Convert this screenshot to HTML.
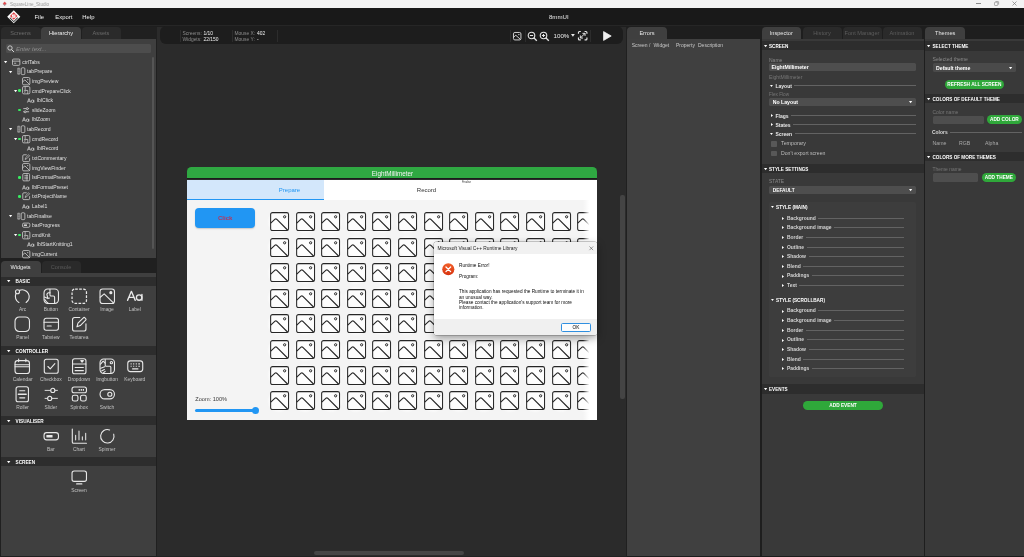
<!DOCTYPE html>
<html><head><meta charset="utf-8"><title>SquareLine_Studio</title><style>
*{box-sizing:border-box;margin:0;padding:0}
html,body{width:1024px;height:557px;overflow:hidden;background:#2b2b2b;font-family:"Liberation Sans",sans-serif;}
.a{position:absolute}
.t{position:absolute;white-space:nowrap;line-height:1;font-size:5.6px;color:#d8d8d8;transform:translateY(-50%)}
.b{font-weight:bold;color:#fff}
.g{color:#8a8a8a}
.hdr{position:absolute;background:#2d2d2d;height:9px}
.tab{position:absolute;border-radius:4px 4px 0 0;height:12px;top:27px;background:#2a2a2a}
.tab.on{background:#3f3f3f}
.line{position:absolute;height:1px;background:#5a5a5a}
.btn{position:absolute;white-space:nowrap;background:#2fa83a;border-radius:5px;color:#fff;font-weight:bold;font-size:4.75px;text-align:center}
.inp{position:absolute;background:#4e4e4e;border-radius:1.5px}
svg{position:absolute;overflow:visible}
</style></head><body><div id="root" style="position:absolute;left:0;top:0;width:1024px;height:557px;will-change:transform;overflow:hidden">
<div class="a" style="left:0px;top:0px;width:1024px;height:8px;background:#f3f3f3;"></div>
<svg style="left:1.7px;top:1.2px" width="5.4" height="5.4" viewBox="0 0 10 10"><path d="M5 0.3L9.7 5L5 9.7L0.3 5Z" fill="#e8d8d8"/><path d="M5 1.3L8.2 4.5L5 7.4L1.8 4.5Z" fill="#e0484c"/><path d="M2 6L5 9L8 6L7.4 5.4L5 7.8L2.6 5.4Z" fill="#666"/></svg>
<div class="t " style="left:10px;top:4.8px;color:#9a9a9a;font-size:4.6px">SquareLine_Studio</div>
<div class="a" style="left:975.5px;top:3.2px;width:5px;height:0.8px;background:#8a8a8a;"></div>
<svg style="left:993.5px;top:0.8px" width="5" height="5" viewBox="0 0 10 10"><rect x="1" y="2.5" width="6.5" height="6.5" rx="1.2" fill="none" stroke="#8a8a8a" stroke-width="1.3"/><path d="M3 1H8.2Q9.2 1 9.2 2V7" fill="none" stroke="#8a8a8a" stroke-width="1.3"/></svg>
<svg style="left:1011.5px;top:0.8px" width="5" height="5" viewBox="0 0 10 10"><path d="M1 1L9 9M9 1L1 9" stroke="#7a7a7a" stroke-width="1.4"/></svg>
<div class="a" style="left:0px;top:8px;width:1024px;height:18px;background:#191919;"></div>
<div class="a" style="left:0px;top:24.6px;width:1024px;height:1px;background:#262626;"></div>
<div class="a" style="left:0px;top:25.6px;width:1024px;height:14px;background:#1e1e1e;"></div>
<svg style="left:7px;top:10px" width="13.5" height="13.5" viewBox="0 0 20 20"><path d="M10 0.3L19.7 10L10 19.7L0.3 10Z" fill="#fff"/><path d="M10 3.2L15.6 8.8L10 14.4L4.4 8.8Z" fill="#e23a3f"/><path d="M7.3 6.7H12.7V8.1H8.9V8.4H12.7V11.4H7.3V10H11.1V9.7H7.3Z" fill="#fff" transform="rotate(0 10 9)"/><path d="M3.6 11.7L10 18L16.4 11.7L15.5 10.8L10 16.2L4.5 10.8Z" fill="#3a3a3a"/></svg>
<div class="t " style="left:34.5px;top:18.2px;color:#f0f0f0;font-size:5.9px">File</div>
<div class="t " style="left:55.3px;top:18.2px;color:#f0f0f0;font-size:5.9px">Export</div>
<div class="t " style="left:82.3px;top:18.2px;color:#f0f0f0;font-size:5.9px">Help</div>
<div class="t " style="left:558.8px;top:16.8px;transform:translate(-50%,-50%);color:#e8e8e8;font-size:6.1px">8mmUI</div>
<div class="a" style="left:157px;top:26.5px;width:470px;height:531px;background:#2b2b2b;"></div>
<div class="a" style="left:160px;top:26.3px;width:463px;height:17.6px;background:#1d1d1d;border-radius:6px"></div>
<div class="a" style="left:179.5px;top:30px;width:0.8px;height:12px;background:#2c2c2c;"></div>
<div class="a" style="left:232.3px;top:30px;width:0.8px;height:12px;background:#2c2c2c;"></div>
<div class="a" style="left:277.3px;top:30px;width:0.8px;height:12px;background:#2c2c2c;"></div>
<div class="a" style="left:509.5px;top:30px;width:0.8px;height:12px;background:#2c2c2c;"></div>
<div class="a" style="left:525px;top:30px;width:0.8px;height:12px;background:#2c2c2c;"></div>
<div class="a" style="left:589.5px;top:30px;width:0.8px;height:12px;background:#2c2c2c;"></div>
<div class="t g" style="left:182.5px;top:34.1px;font-size:4.9px;color:#8c8c8c">Screens:</div>
<div class="t " style="left:203.5px;top:34.1px;font-size:4.9px;color:#eee">1/10</div>
<div class="t g" style="left:182.5px;top:39.9px;font-size:4.9px;color:#8c8c8c">Widgets:</div>
<div class="t " style="left:203.5px;top:39.9px;font-size:4.9px;color:#eee">22/150</div>
<div class="t g" style="left:234.5px;top:34.1px;font-size:4.9px;color:#8c8c8c">Mouse X:</div>
<div class="t " style="left:257px;top:34.1px;font-size:4.9px;color:#eee">402</div>
<div class="t g" style="left:234.5px;top:39.9px;font-size:4.9px;color:#8c8c8c">Mouse Y:</div>
<div class="t " style="left:257px;top:39.9px;font-size:4.9px;color:#eee">-</div>
<svg style="left:512.8px;top:31.5px" width="8.4" height="8.4" viewBox="0 0 18 18"><rect x="1" y="1" width="16" height="16" rx="3" fill="none" stroke="#e6e6e6" stroke-width="1.9"/><path d="M1.5 11L6 7L16 16" fill="none" stroke="#e6e6e6" stroke-width="1.9"/><circle cx="12.6" cy="5.6" r="1.5" fill="#e6e6e6"/></svg>
<svg style="left:526.6px;top:30.6px" width="10.6" height="10.6" viewBox="0 0 20 20"><circle cx="8.5" cy="8.5" r="6.2" fill="none" stroke="#e6e6e6" stroke-width="2.1"/><path d="M13 13L18.5 18.5" stroke="#e6e6e6" stroke-width="2.6"/><path d="M5.5 8.5H11.5" stroke="#e6e6e6" stroke-width="2"/></svg>
<svg style="left:538.8px;top:30.6px" width="10.6" height="10.6" viewBox="0 0 20 20"><circle cx="8.5" cy="8.5" r="6.2" fill="none" stroke="#e6e6e6" stroke-width="2.1"/><path d="M13 13L18.5 18.5" stroke="#e6e6e6" stroke-width="2.6"/><path d="M5.5 8.5H11.5M8.5 5.5V11.5" stroke="#e6e6e6" stroke-width="2"/></svg>
<div class="t " style="left:553.5px;top:35.699999999999996px;color:#e8e8e8;font-size:6.2px">100%</div>
<svg style="left:570.6px;top:34.46px" width="3.8" height="2.6599999999999997" viewBox="0 0 2 1.4"><path d="M0 0H2L1 1.4Z" fill="#e8e8e8"/></svg>
<svg style="left:578px;top:31px" width="9.4" height="9.4" viewBox="0 0 20 20"><path d="M1 6V3Q1 1 3 1H6M14 1H17Q19 1 19 3V6M19 14V17Q19 19 17 19H14M6 19H3Q1 19 1 17V14" fill="none" stroke="#e6e6e6" stroke-width="2.5"/><path d="M5 15L15 5M9.5 5H15V10.5M5 9.5V15H10.5" fill="none" stroke="#e6e6e6" stroke-width="2.1"/></svg>
<svg style="left:603.2px;top:30.9px" width="8.6" height="10" viewBox="0 0 9 10.4"><path d="M0.6 0.6L8.6 5.2L0.6 9.8Z" fill="#f0f0f0" stroke="#f0f0f0" stroke-width="0.8" stroke-linejoin="round"/></svg>
<div class="a" style="left:620.2px;top:195px;width:4.8px;height:204px;background:#444;border-radius:2px"></div>
<div class="a" style="left:313.5px;top:550.5px;width:150px;height:4.5px;background:#454545;border-radius:2px"></div>
<div class="a" style="left:157px;top:556px;width:470px;height:1px;background:#222;"></div>
<div class="a" style="left:0px;top:26.5px;width:157px;height:531px;background:#202020;"></div>
<div class="tab" style="left:1px;width:39.5px"></div>
<div class="tab on" style="left:41px;width:40px"></div>
<div class="tab" style="left:82px;width:38.5px"></div>
<div class="t " style="left:20.5px;top:33.9px;transform:translate(-50%,-50%);color:#6a6a6a;font-size:5.6px">Screens</div>
<div class="t " style="left:61px;top:33.9px;transform:translate(-50%,-50%);color:#f0f0f0;font-size:5.6px">Hierarchy</div>
<div class="t " style="left:101px;top:33.9px;transform:translate(-50%,-50%);color:#6a6a6a;font-size:5.6px">Assets</div>
<div class="a" style="left:1px;top:39px;width:155px;height:218.5px;background:#3f3f3f;"></div>
<div class="a" style="left:6px;top:43.5px;width:145px;height:9px;background:#4d4d4d;border-radius:1.5px"></div>
<svg style="left:7px;top:44.5px" width="7.5" height="7.5" viewBox="0 0 20 20"><circle cx="8" cy="8" r="5.8" fill="none" stroke="#e0e0e0" stroke-width="2.2"/><path d="M12.5 12.5L18.5 18.5" stroke="#e0e0e0" stroke-width="2.6"/></svg>
<div class="t " style="left:16px;top:48.9px;color:#8e8e8e;font-style:italic;font-size:6px">Enter text...</div>
<div class="a" style="left:152px;top:57px;width:1.6px;height:192px;background:#555;border-radius:1px"></div>
<svg style="left:3.6999999999999997px;top:61.04px" width="3.2" height="2.2399999999999998" viewBox="0 0 2 1.4"><path d="M0 0H2L1 1.4Z" fill="#fff"/></svg>
<svg style="left:12.0px;top:57.599999999999994px" width="8.4" height="8.4" viewBox="0 0 16 16" fill="none" stroke="#dcdcdc" stroke-width="1.4"><rect x="1" y="2" width="14" height="12" rx="2"/><path d="M1 6H15M4 10H8"/></svg>
<div class="t " style="left:22.2px;top:62.699999999999996px;font-size:5.1px;color:#e0e0e0">ctrlTabs</div>
<svg style="left:8.6px;top:70.66000000000001px" width="3.2" height="2.2399999999999998" viewBox="0 0 2 1.4"><path d="M0 0H2L1 1.4Z" fill="#fff"/></svg>
<svg style="left:16.9px;top:67.22px" width="8.4" height="8.4" viewBox="0 0 16 16" fill="none" stroke="#dcdcdc" stroke-width="1.4"><rect x="1.2" y="2" width="4.2" height="12" rx="0.8" fill="#8a8a8a" stroke="#b0b0b0" stroke-width="1"/><path d="M1.2 6H5.4M1.2 10H5.4" stroke="#3f3f3f" stroke-width="0.9"/><rect x="8" y="1.5" width="7" height="13" rx="2"/></svg>
<div class="t " style="left:27.099999999999998px;top:72.32000000000001px;font-size:5.1px;color:#e0e0e0">tabPrepare</div>
<svg style="left:21.8px;top:76.83999999999999px" width="8.4" height="8.4" viewBox="0 0 16 16" fill="none" stroke="#dcdcdc" stroke-width="1.4"><rect x="1" y="1" width="14" height="14" rx="2.5"/><path d="M1.5 9L5.5 5.5L14.5 14.5"/><circle cx="11" cy="5" r="1" fill="#dcdcdc" stroke="none"/></svg>
<div class="t " style="left:32.0px;top:81.94px;font-size:5.1px;color:#e0e0e0">imgPreview</div>
<svg style="left:13.500000000000002px;top:89.9px" width="3.2" height="2.2399999999999998" viewBox="0 0 2 1.4"><path d="M0 0H2L1 1.4Z" fill="#fff"/></svg>
<div class="a" style="left:17.900000000000002px;top:89.46px;width:2.7px;height:2.7px;border-radius:50%;background:#38ee62"></div>
<svg style="left:21.8px;top:86.46px" width="8.4" height="8.4" viewBox="0 0 16 16" fill="none" stroke="#dcdcdc" stroke-width="1.4"><rect x="1" y="1" width="14" height="14" rx="2.5"/><path d="M6 1.5V8.5H11V15M3.5 9.5L6 8.5M4 12L7 11" stroke-width="1.3"/></svg>
<div class="t " style="left:32.0px;top:91.56px;font-size:5.1px;color:#e0e0e0">cmdPrepareClick</div>
<svg style="left:26.800000000000004px;top:97.98px" width="7.4" height="4.9" viewBox="0 0 21 14" fill="none" stroke="#dcdcdc" stroke-width="2"><path d="M1 13L5.7 1.5L10.4 13M2.7 9.2H8.7"/><circle cx="15.6" cy="9.2" r="3.5"/><path d="M19.4 5.2V13.2"/></svg>
<div class="t " style="left:36.900000000000006px;top:101.18px;font-size:5.1px;color:#e0e0e0">lblClick</div>
<div class="a" style="left:17.900000000000002px;top:108.69999999999999px;width:2.7px;height:2.7px;border-radius:50%;background:#38ee62"></div>
<svg style="left:21.8px;top:105.69999999999999px" width="8.4" height="8.4" viewBox="0 0 16 16" fill="none" stroke="#dcdcdc" stroke-width="1.4"><path d="M2.5 5H13.5M2.5 11H13.5" stroke-width="1.5"/><circle cx="10" cy="5" r="1.9" fill="#3f3f3f"/><circle cx="6" cy="11" r="1.9" fill="#3f3f3f"/></svg>
<div class="t " style="left:32.0px;top:110.8px;font-size:5.1px;color:#e0e0e0">slideZoom</div>
<svg style="left:21.900000000000002px;top:117.22px" width="7.4" height="4.9" viewBox="0 0 21 14" fill="none" stroke="#dcdcdc" stroke-width="2"><path d="M1 13L5.7 1.5L10.4 13M2.7 9.2H8.7"/><circle cx="15.6" cy="9.2" r="3.5"/><path d="M19.4 5.2V13.2"/></svg>
<div class="t " style="left:32.0px;top:120.42px;font-size:5.1px;color:#e0e0e0">lblZoom</div>
<svg style="left:8.6px;top:128.37999999999997px" width="3.2" height="2.2399999999999998" viewBox="0 0 2 1.4"><path d="M0 0H2L1 1.4Z" fill="#fff"/></svg>
<svg style="left:16.9px;top:124.93999999999998px" width="8.4" height="8.4" viewBox="0 0 16 16" fill="none" stroke="#dcdcdc" stroke-width="1.4"><rect x="1.2" y="2" width="4.2" height="12" rx="0.8" fill="#8a8a8a" stroke="#b0b0b0" stroke-width="1"/><path d="M1.2 6H5.4M1.2 10H5.4" stroke="#3f3f3f" stroke-width="0.9"/><rect x="8" y="1.5" width="7" height="13" rx="2"/></svg>
<div class="t " style="left:27.099999999999998px;top:130.04px;font-size:5.1px;color:#e0e0e0">tabRecord</div>
<svg style="left:13.500000000000002px;top:137.99999999999997px" width="3.2" height="2.2399999999999998" viewBox="0 0 2 1.4"><path d="M0 0H2L1 1.4Z" fill="#fff"/></svg>
<div class="a" style="left:17.900000000000002px;top:137.56px;width:2.7px;height:2.7px;border-radius:50%;background:#38ee62"></div>
<svg style="left:21.8px;top:134.56px" width="8.4" height="8.4" viewBox="0 0 16 16" fill="none" stroke="#dcdcdc" stroke-width="1.4"><rect x="1" y="1" width="14" height="14" rx="2.5"/><path d="M6 1.5V8.5H11V15M3.5 9.5L6 8.5M4 12L7 11" stroke-width="1.3"/></svg>
<div class="t " style="left:32.0px;top:139.66px;font-size:5.1px;color:#e0e0e0">cmdRecord</div>
<svg style="left:26.800000000000004px;top:146.08px" width="7.4" height="4.9" viewBox="0 0 21 14" fill="none" stroke="#dcdcdc" stroke-width="2"><path d="M1 13L5.7 1.5L10.4 13M2.7 9.2H8.7"/><circle cx="15.6" cy="9.2" r="3.5"/><path d="M19.4 5.2V13.2"/></svg>
<div class="t " style="left:36.900000000000006px;top:149.28px;font-size:5.1px;color:#e0e0e0">lblRecord</div>
<svg style="left:21.8px;top:153.8px" width="8.4" height="8.4" viewBox="0 0 16 16" fill="none" stroke="#dcdcdc" stroke-width="1.4"><path d="M9 1.5H3.5Q1.5 1.5 1.5 3.5V12.5Q1.5 14.5 3.5 14.5H12.5Q14.5 14.5 14.5 12.5V8"/><path d="M6 10.5L7 7L12.5 1.5L14.5 3.5L9 9Z" stroke-width="1.2"/></svg>
<div class="t " style="left:32.0px;top:158.9px;font-size:5.1px;color:#e0e0e0">txtCommentary</div>
<svg style="left:21.8px;top:163.42000000000002px" width="8.4" height="8.4" viewBox="0 0 16 16" fill="none" stroke="#dcdcdc" stroke-width="1.4"><rect x="1" y="1" width="14" height="14" rx="2.5"/><path d="M1.5 9L5.5 5.5L14.5 14.5"/><circle cx="11" cy="5" r="1" fill="#dcdcdc" stroke="none"/></svg>
<div class="t " style="left:32.0px;top:168.52px;font-size:5.1px;color:#e0e0e0">imgViewFinder</div>
<div class="a" style="left:17.900000000000002px;top:176.04000000000002px;width:2.7px;height:2.7px;border-radius:50%;background:#38ee62"></div>
<svg style="left:21.8px;top:173.04000000000002px" width="8.4" height="8.4" viewBox="0 0 16 16" fill="none" stroke="#dcdcdc" stroke-width="1.4"><rect x="1.5" y="1" width="13" height="14" rx="2"/><path d="M4.5 5H11.5M4.5 8H11.5M4.5 11H11.5" stroke-width="1.3"/><path d="M9.5 1V15" stroke-width="1"/></svg>
<div class="t " style="left:32.0px;top:178.14000000000001px;font-size:5.1px;color:#e0e0e0">lstFormatPresets</div>
<svg style="left:21.900000000000002px;top:184.56px" width="7.4" height="4.9" viewBox="0 0 21 14" fill="none" stroke="#dcdcdc" stroke-width="2"><path d="M1 13L5.7 1.5L10.4 13M2.7 9.2H8.7"/><circle cx="15.6" cy="9.2" r="3.5"/><path d="M19.4 5.2V13.2"/></svg>
<div class="t " style="left:32.0px;top:187.76px;font-size:5.1px;color:#e0e0e0">lblFormatPreset</div>
<div class="a" style="left:17.900000000000002px;top:195.27999999999997px;width:2.7px;height:2.7px;border-radius:50%;background:#38ee62"></div>
<svg style="left:21.8px;top:192.27999999999997px" width="8.4" height="8.4" viewBox="0 0 16 16" fill="none" stroke="#dcdcdc" stroke-width="1.4"><path d="M9 1.5H3.5Q1.5 1.5 1.5 3.5V12.5Q1.5 14.5 3.5 14.5H12.5Q14.5 14.5 14.5 12.5V8"/><path d="M6 10.5L7 7L12.5 1.5L14.5 3.5L9 9Z" stroke-width="1.2"/></svg>
<div class="t " style="left:32.0px;top:197.37999999999997px;font-size:5.1px;color:#e0e0e0">txtProjectName</div>
<svg style="left:21.900000000000002px;top:203.79999999999998px" width="7.4" height="4.9" viewBox="0 0 21 14" fill="none" stroke="#dcdcdc" stroke-width="2"><path d="M1 13L5.7 1.5L10.4 13M2.7 9.2H8.7"/><circle cx="15.6" cy="9.2" r="3.5"/><path d="M19.4 5.2V13.2"/></svg>
<div class="t " style="left:32.0px;top:206.99999999999997px;font-size:5.1px;color:#e0e0e0">Label1</div>
<svg style="left:8.6px;top:214.95999999999995px" width="3.2" height="2.2399999999999998" viewBox="0 0 2 1.4"><path d="M0 0H2L1 1.4Z" fill="#fff"/></svg>
<svg style="left:16.9px;top:211.51999999999998px" width="8.4" height="8.4" viewBox="0 0 16 16" fill="none" stroke="#dcdcdc" stroke-width="1.4"><rect x="1.2" y="2" width="4.2" height="12" rx="0.8" fill="#8a8a8a" stroke="#b0b0b0" stroke-width="1"/><path d="M1.2 6H5.4M1.2 10H5.4" stroke="#3f3f3f" stroke-width="0.9"/><rect x="8" y="1.5" width="7" height="13" rx="2"/></svg>
<div class="t " style="left:27.099999999999998px;top:216.61999999999998px;font-size:5.1px;color:#e0e0e0">tabFinalise</div>
<svg style="left:21.8px;top:221.14px" width="8.4" height="8.4" viewBox="0 0 16 16" fill="none" stroke="#dcdcdc" stroke-width="1.4"><rect x="1" y="4" width="14" height="8" rx="2.5"/><rect x="3.5" y="6.6" width="6" height="2.8" fill="#dcdcdc" stroke="none"/></svg>
<div class="t " style="left:32.0px;top:226.23999999999998px;font-size:5.1px;color:#e0e0e0">barProgress</div>
<svg style="left:13.500000000000002px;top:234.19999999999996px" width="3.2" height="2.2399999999999998" viewBox="0 0 2 1.4"><path d="M0 0H2L1 1.4Z" fill="#fff"/></svg>
<div class="a" style="left:17.900000000000002px;top:233.76px;width:2.7px;height:2.7px;border-radius:50%;background:#38ee62"></div>
<svg style="left:21.8px;top:230.76px" width="8.4" height="8.4" viewBox="0 0 16 16" fill="none" stroke="#dcdcdc" stroke-width="1.4"><rect x="1" y="1" width="14" height="14" rx="2.5"/><path d="M6 1.5V8.5H11V15M3.5 9.5L6 8.5M4 12L7 11" stroke-width="1.3"/></svg>
<div class="t " style="left:32.0px;top:235.85999999999999px;font-size:5.1px;color:#e0e0e0">cmdKnit</div>
<svg style="left:26.800000000000004px;top:242.28px" width="7.4" height="4.9" viewBox="0 0 21 14" fill="none" stroke="#dcdcdc" stroke-width="2"><path d="M1 13L5.7 1.5L10.4 13M2.7 9.2H8.7"/><circle cx="15.6" cy="9.2" r="3.5"/><path d="M19.4 5.2V13.2"/></svg>
<div class="t " style="left:36.900000000000006px;top:245.48px;font-size:5.1px;color:#e0e0e0">lblStartKnitting1</div>
<svg style="left:21.8px;top:250.0px" width="8.4" height="8.4" viewBox="0 0 16 16" fill="none" stroke="#dcdcdc" stroke-width="1.4"><rect x="1" y="1" width="14" height="14" rx="2.5"/><path d="M1.5 9L5.5 5.5L14.5 14.5"/><circle cx="11" cy="5" r="1" fill="#dcdcdc" stroke="none"/></svg>
<div class="t " style="left:32.0px;top:255.1px;font-size:5.1px;color:#e0e0e0">imgCurrent</div>
<div class="tab on" style="left:1px;top:261px;width:39.5px;height:12.5px"></div>
<div class="tab" style="left:42px;top:261px;width:38.5px;height:12.5px"></div>
<div class="t " style="left:20.5px;top:268.2px;transform:translate(-50%,-50%);color:#f0f0f0;font-size:5.6px">Widgets</div>
<div class="t " style="left:61px;top:268.2px;transform:translate(-50%,-50%);color:#5a5a5a;font-size:5.6px">Console</div>
<div class="a" style="left:1px;top:273px;width:155px;height:282.6px;background:#3f3f3f;"></div>
<div class="a" style="left:1px;top:276.7px;width:155px;height:9px;background:#2d2d2d;"></div>
<svg style="left:6.499999999999999px;top:280.28000000000003px" width="3.4" height="2.38" viewBox="0 0 2 1.4"><path d="M0 0H2L1 1.4Z" fill="#fff"/></svg>
<div class="t b" style="left:15.6px;top:282.29999999999995px;font-size:4.7px">BASIC</div>
<div class="a" style="left:1px;top:346.3px;width:155px;height:9px;background:#2d2d2d;"></div>
<svg style="left:6.499999999999999px;top:349.88000000000005px" width="3.4" height="2.38" viewBox="0 0 2 1.4"><path d="M0 0H2L1 1.4Z" fill="#fff"/></svg>
<div class="t b" style="left:15.6px;top:351.9px;font-size:4.7px">CONTROLLER</div>
<div class="a" style="left:1px;top:416px;width:155px;height:9px;background:#2d2d2d;"></div>
<svg style="left:6.499999999999999px;top:419.58000000000004px" width="3.4" height="2.38" viewBox="0 0 2 1.4"><path d="M0 0H2L1 1.4Z" fill="#fff"/></svg>
<div class="t b" style="left:15.6px;top:421.59999999999997px;font-size:4.7px">VISUALISER</div>
<div class="a" style="left:1px;top:457.3px;width:155px;height:9px;background:#2d2d2d;"></div>
<svg style="left:6.499999999999999px;top:460.88000000000005px" width="3.4" height="2.38" viewBox="0 0 2 1.4"><path d="M0 0H2L1 1.4Z" fill="#fff"/></svg>
<div class="t b" style="left:15.6px;top:462.9px;font-size:4.7px">SCREEN</div>
<svg style="left:14.350000000000001px;top:287.75px" width="16.5" height="16.5" viewBox="0 0 32 32" fill="none" stroke="#e8e8e8" stroke-width="2.15" stroke-linecap="round" stroke-linejoin="round"><path d="M10.6 4.6A13.5 13.5 0 0 1 23.5 28.2M9.5 28.2A13.5 13.5 0 0 1 3.6 11.2"/><circle cx="6.8" cy="7.3" r="3.9"/></svg>
<div class="t " style="left:22.6px;top:309.9px;transform:translate(-50%,-50%);font-size:4.9px;color:#c2c2c2">Arc</div>
<svg style="left:42.55px;top:287.75px" width="16.5" height="16.5" viewBox="0 0 32 32" fill="none" stroke="#e8e8e8" stroke-width="2.15" stroke-linecap="round" stroke-linejoin="round"><rect x="2" y="2" width="28" height="28" rx="7"/><path d="M13.5 2.5V13.5Q13.5 15.5 15.5 15.5H20Q22.5 15.5 22.5 18V29.5"/><path d="M13.5 9.5Q8.5 8 7.5 12.5L9.5 20.5M3 17.5L9.5 20.5L12.5 19.5M3.5 22.5Q6 27 10 29.5"/></svg>
<div class="t " style="left:50.8px;top:309.9px;transform:translate(-50%,-50%);font-size:4.9px;color:#c2c2c2">Button</div>
<svg style="left:70.75px;top:287.75px" width="16.5" height="16.5" viewBox="0 0 32 32" fill="none" stroke="#e8e8e8" stroke-width="2.15" stroke-linecap="round" stroke-linejoin="round"><rect x="2" y="2" width="28" height="28" rx="6" stroke-dasharray="5.2 2.6" stroke-linecap="butt" stroke-width="2.4"/></svg>
<div class="t " style="left:79px;top:309.9px;transform:translate(-50%,-50%);font-size:4.9px;color:#c2c2c2">Container</div>
<svg style="left:98.75px;top:287.75px" width="16.5" height="16.5" viewBox="0 0 32 32" fill="none" stroke="#e8e8e8" stroke-width="2.15" stroke-linecap="round" stroke-linejoin="round"><rect x="2" y="2" width="28" height="28" rx="5"/><path d="M2.5 18L10 11.5L28.5 29.5"/><circle cx="23" cy="9" r="2" fill="#e8e8e8"/></svg>
<div class="t " style="left:107px;top:309.9px;transform:translate(-50%,-50%);font-size:4.9px;color:#c2c2c2">Image</div>
<svg style="left:126.05000000000001px;top:287.75px" width="17.5" height="16.5" viewBox="0 0 34 32" fill="none" stroke="#e8e8e8" stroke-width="2.6" stroke-linecap="round" stroke-linejoin="round"><path d="M3 24L10.5 6.5L18 24M5.6 18.2H15.4"/><circle cx="25.5" cy="18.5" r="5.3"/><path d="M31 12.5V24"/></svg>
<div class="t " style="left:134.8px;top:309.9px;transform:translate(-50%,-50%);font-size:4.9px;color:#c2c2c2">Label</div>
<svg style="left:14.350000000000001px;top:316.15px" width="16.5" height="16.5" viewBox="0 0 32 32" fill="none" stroke="#e8e8e8" stroke-width="2.15" stroke-linecap="round" stroke-linejoin="round"><rect x="2" y="2" width="28" height="28" rx="8"/></svg>
<div class="t " style="left:22.6px;top:338.29999999999995px;transform:translate(-50%,-50%);font-size:4.9px;color:#c2c2c2">Panel</div>
<svg style="left:42.55px;top:316.15px" width="16.5" height="16.5" viewBox="0 0 32 32" fill="none" stroke="#e8e8e8" stroke-width="2.15" stroke-linecap="round" stroke-linejoin="round"><rect x="2" y="4.5" width="28" height="23" rx="4"/><path d="M2 12H30M8 19.5H16"/></svg>
<div class="t " style="left:50.8px;top:338.29999999999995px;transform:translate(-50%,-50%);font-size:4.9px;color:#c2c2c2">Tabview</div>
<svg style="left:70.75px;top:316.15px" width="16.5" height="16.5" viewBox="0 0 32 32" fill="none" stroke="#e8e8e8" stroke-width="2.15" stroke-linecap="round" stroke-linejoin="round"><path d="M17 3H7Q3 3 3 7V25Q3 29 7 29H25Q29 29 29 25V15"/><path d="M11.5 21L13.5 14L24 3.5Q25.5 2 27 3.5L28.5 5Q30 6.5 28.5 8L18 18.5Z"/></svg>
<div class="t " style="left:79px;top:338.29999999999995px;transform:translate(-50%,-50%);font-size:4.9px;color:#c2c2c2">Textarea</div>
<svg style="left:14.350000000000001px;top:357.75px" width="16.5" height="16.5" viewBox="0 0 32 32" fill="none" stroke="#e8e8e8" stroke-width="2.15" stroke-linecap="round" stroke-linejoin="round"><rect x="2" y="5" width="28" height="25" rx="5"/><path d="M2 13H30M2 17H30M9 2V7M23 2V7"/></svg>
<div class="t " style="left:22.6px;top:379.9px;transform:translate(-50%,-50%);font-size:4.9px;color:#c2c2c2">Calendar</div>
<svg style="left:42.55px;top:357.75px" width="16.5" height="16.5" viewBox="0 0 32 32" fill="none" stroke="#e8e8e8" stroke-width="2.15" stroke-linecap="round" stroke-linejoin="round"><rect x="2.5" y="2.5" width="27" height="27" rx="4"/><path d="M9.5 16.5L14 21L23 11"/></svg>
<div class="t " style="left:50.8px;top:379.9px;transform:translate(-50%,-50%);font-size:4.9px;color:#c2c2c2">Checkbox</div>
<svg style="left:70.75px;top:357.75px" width="16.5" height="16.5" viewBox="0 0 32 32" fill="none" stroke="#e8e8e8" stroke-width="2.15" stroke-linecap="round" stroke-linejoin="round"><rect x="3" y="1.5" width="26" height="29" rx="4"/><path d="M3 11.5H29M8 18.5H24M8 24.5H24"/><path d="M19 5L21.5 8L24 5Z" fill="#e8e8e8"/></svg>
<div class="t " style="left:79px;top:379.9px;transform:translate(-50%,-50%);font-size:4.9px;color:#c2c2c2">Dropdown</div>
<svg style="left:98.75px;top:357.75px" width="16.5" height="16.5" viewBox="0 0 32 32" fill="none" stroke="#e8e8e8" stroke-width="2.15" stroke-linecap="round" stroke-linejoin="round"><rect x="2" y="2" width="28" height="28" rx="7"/><path d="M12 3V14Q12 16 14 16H21Q23 16 23 18V29"/><path d="M3 12L8 6L12 10M3.5 20L11 17M5 25L10.5 22.5M8.5 29L12 26"/><circle cx="24" cy="9" r="2.2"/></svg>
<div class="t " style="left:107px;top:379.9px;transform:translate(-50%,-50%);font-size:4.9px;color:#c2c2c2">Imgbutton</div>
<svg style="left:126.55000000000001px;top:357.75px" width="16.5" height="16.5" viewBox="0 0 32 32" fill="none" stroke="#e8e8e8" stroke-width="2.15" stroke-linecap="round" stroke-linejoin="round"><rect x="1.5" y="5.5" width="29" height="21" rx="5"/><path d="M7 11.5H9M12 11.5H14M17 11.5H19M22 11.5H25M7 16H9M12 16H14M17 16H19M22 16H25M10 21H22" stroke-width="2.2" stroke-linecap="butt"/></svg>
<div class="t " style="left:134.8px;top:379.9px;transform:translate(-50%,-50%);font-size:4.9px;color:#c2c2c2">Keyboard</div>
<svg style="left:14.350000000000001px;top:386.15px" width="16.5" height="16.5" viewBox="0 0 32 32" fill="none" stroke="#e8e8e8" stroke-width="2.15" stroke-linecap="round" stroke-linejoin="round"><rect x="4" y="1.5" width="24" height="29" rx="4"/><path d="M11 9H21M11 23H21" stroke-width="2"/><path d="M8.5 16H23.5" stroke-width="3"/></svg>
<div class="t " style="left:22.6px;top:408.29999999999995px;transform:translate(-50%,-50%);font-size:4.9px;color:#c2c2c2">Roller</div>
<svg style="left:42.55px;top:386.15px" width="16.5" height="16.5" viewBox="0 0 32 32" fill="none" stroke="#e8e8e8" stroke-width="2.15" stroke-linecap="round" stroke-linejoin="round"><path d="M4 8.5H28M4 24H28" stroke-width="1.8"/><circle cx="19" cy="8.5" r="4" fill="#3f3f3f"/><circle cx="13" cy="24" r="4" fill="#3f3f3f"/></svg>
<div class="t " style="left:50.8px;top:408.29999999999995px;transform:translate(-50%,-50%);font-size:4.9px;color:#c2c2c2">Slider</div>
<svg style="left:70.75px;top:386.15px" width="16.5" height="16.5" viewBox="0 0 32 32" fill="none" stroke="#e8e8e8" stroke-width="2.15" stroke-linecap="round" stroke-linejoin="round"><rect x="2" y="2" width="28" height="11" rx="4"/><path d="M16 6V9M20 6V9M24 6V9" stroke-width="2.4" stroke-linecap="butt"/><rect x="2.5" y="18" width="11" height="11" rx="3.5"/><rect x="18.5" y="18" width="11" height="11" rx="3.5"/></svg>
<div class="t " style="left:79px;top:408.29999999999995px;transform:translate(-50%,-50%);font-size:4.9px;color:#c2c2c2">Spinbox</div>
<svg style="left:98.75px;top:386.15px" width="16.5" height="16.5" viewBox="0 0 32 32" fill="none" stroke="#e8e8e8" stroke-width="2.15" stroke-linecap="round" stroke-linejoin="round"><rect x="2" y="7" width="28" height="18" rx="9"/><circle cx="21" cy="16" r="4"/></svg>
<div class="t " style="left:107px;top:408.29999999999995px;transform:translate(-50%,-50%);font-size:4.9px;color:#c2c2c2">Switch</div>
<svg style="left:42.55px;top:427.75px" width="16.5" height="16.5" viewBox="0 0 32 32" fill="none" stroke="#e8e8e8" stroke-width="2.15" stroke-linecap="round" stroke-linejoin="round"><rect x="2" y="9" width="28" height="14" rx="5"/><rect x="6.5" y="13.5" width="12" height="5" rx="1" fill="#e8e8e8" stroke="none"/></svg>
<div class="t " style="left:50.8px;top:449.9px;transform:translate(-50%,-50%);font-size:4.9px;color:#c2c2c2">Bar</div>
<svg style="left:70.75px;top:427.75px" width="16.5" height="16.5" viewBox="0 0 32 32" fill="none" stroke="#e8e8e8" stroke-width="2.15" stroke-linecap="round" stroke-linejoin="round"><path d="M2.5 2V27Q2.5 29.5 5 29.5H30"/><path d="M9 23V14M15.5 23V6M22 23V17M28.5 23V10" stroke-width="2"/></svg>
<div class="t " style="left:79px;top:449.9px;transform:translate(-50%,-50%);font-size:4.9px;color:#c2c2c2">Chart</div>
<svg style="left:98.75px;top:427.75px" width="16.5" height="16.5" viewBox="0 0 32 32" fill="none" stroke="#e8e8e8" stroke-width="2.15" stroke-linecap="round" stroke-linejoin="round"><path d="M20.5 3.8A13 13 0 1 0 28.5 12"/></svg>
<div class="t " style="left:107px;top:449.9px;transform:translate(-50%,-50%);font-size:4.9px;color:#c2c2c2">Spinner</div>
<svg style="left:70.75px;top:468.75px" width="16.5" height="16.5" viewBox="0 0 32 32" fill="none" stroke="#e8e8e8" stroke-width="2.15" stroke-linecap="round" stroke-linejoin="round"><rect x="2" y="4" width="28" height="20" rx="4"/><path d="M11 29H21" stroke-width="2.4"/></svg>
<div class="t " style="left:79px;top:490.9px;transform:translate(-50%,-50%);font-size:4.9px;color:#c2c2c2">Screen</div>
<div class="a" style="left:187px;top:167px;width:410px;height:11px;background:#2fa842;border-radius:4.5px 4.5px 0 0"></div>
<div class="t " style="left:392.5px;top:173.5px;transform:translate(-50%,-50%);color:#f4f4f4;font-size:6.3px">EightMillimeter</div>
<div class="a" style="left:187px;top:177.7px;width:410px;height:1.8px;background:#1c1c1c;"></div>
<div class="a" style="left:187px;top:179.5px;width:410px;height:240.5px;background:#f4f4f4;overflow:hidden">
<div class="a" style="left:0;top:0;width:410px;height:20px;background:#fff"></div>
<div class="a" style="left:0;top:0;width:137px;height:20px;background:#d3e7fb;border-bottom:1.6px solid #2196f3"></div>
<div class="t" style="left:102.5px;top:10.6px;transform:translate(-50%,-50%);color:#2196f3;font-size:6px">Prepare</div>
<div class="t" style="left:239.5px;top:10.6px;transform:translate(-50%,-50%);color:#333;font-size:6px">Record</div>
<div class="t" style="left:279.5px;top:3.2px;transform:translate(-50%,-50%);color:#333;font-size:2.6px">Finalise</div>
<div class="a" style="left:8px;top:28.8px;width:60.3px;height:20px;background:#2196f3;border-radius:4px;box-shadow:0 1px 1.5px rgba(0,0,0,.18)"></div>
<div class="t" style="left:38.2px;top:38.5px;transform:translate(-50%,-50%);color:#b8355c;font-weight:bold;font-size:6px">Click</div>
<div class="t" style="left:8.3px;top:220.5px;color:#3a3a3a;font-size:5.6px">Zoom: 100%</div>
<div class="a" style="left:8.3px;top:229.2px;width:63px;height:3.6px;border-radius:2px;background:#2196f3"></div>
<div class="a" style="left:64.6px;top:227.1px;width:7.8px;height:7.8px;border-radius:4px;background:#2196f3"></div>
<div class="a" style="left:74px;top:24px;width:328px;height:216px;overflow:hidden">
<div class="a" style="left:6.4px;top:6.0px;width:24px;height:24px;background:radial-gradient(closest-side,#fdfdfd 70%,rgba(253,253,253,0) 100%)"></div>
<svg style="left:8.9px;top:8.5px" width="19.2" height="19.2" viewBox="0 0 24 24" fill="none" stroke="#262626" stroke-width="1.3"><rect x="0.8" y="0.8" width="22.4" height="22.4" rx="2.3"/><path d="M0.9 14L6.3 9Q7.3 8.1 8.3 9L22.2 22.8" stroke-linejoin="round" stroke-width="1.45"/><circle cx="18.3" cy="6" r="1.4" stroke-width="1.25"/></svg>
<div class="a" style="left:32.0px;top:6.0px;width:24px;height:24px;background:radial-gradient(closest-side,#fdfdfd 70%,rgba(253,253,253,0) 100%)"></div>
<svg style="left:34.5px;top:8.5px" width="19.2" height="19.2" viewBox="0 0 24 24" fill="none" stroke="#262626" stroke-width="1.3"><rect x="0.8" y="0.8" width="22.4" height="22.4" rx="2.3"/><path d="M0.9 14L6.3 9Q7.3 8.1 8.3 9L22.2 22.8" stroke-linejoin="round" stroke-width="1.45"/><circle cx="18.3" cy="6" r="1.4" stroke-width="1.25"/></svg>
<div class="a" style="left:57.6px;top:6.0px;width:24px;height:24px;background:radial-gradient(closest-side,#fdfdfd 70%,rgba(253,253,253,0) 100%)"></div>
<svg style="left:60.1px;top:8.5px" width="19.2" height="19.2" viewBox="0 0 24 24" fill="none" stroke="#262626" stroke-width="1.3"><rect x="0.8" y="0.8" width="22.4" height="22.4" rx="2.3"/><path d="M0.9 14L6.3 9Q7.3 8.1 8.3 9L22.2 22.8" stroke-linejoin="round" stroke-width="1.45"/><circle cx="18.3" cy="6" r="1.4" stroke-width="1.25"/></svg>
<div class="a" style="left:83.20000000000002px;top:6.0px;width:24px;height:24px;background:radial-gradient(closest-side,#fdfdfd 70%,rgba(253,253,253,0) 100%)"></div>
<svg style="left:85.7px;top:8.5px" width="19.2" height="19.2" viewBox="0 0 24 24" fill="none" stroke="#262626" stroke-width="1.3"><rect x="0.8" y="0.8" width="22.4" height="22.4" rx="2.3"/><path d="M0.9 14L6.3 9Q7.3 8.1 8.3 9L22.2 22.8" stroke-linejoin="round" stroke-width="1.45"/><circle cx="18.3" cy="6" r="1.4" stroke-width="1.25"/></svg>
<div class="a" style="left:108.80000000000001px;top:6.0px;width:24px;height:24px;background:radial-gradient(closest-side,#fdfdfd 70%,rgba(253,253,253,0) 100%)"></div>
<svg style="left:111.3px;top:8.5px" width="19.2" height="19.2" viewBox="0 0 24 24" fill="none" stroke="#262626" stroke-width="1.3"><rect x="0.8" y="0.8" width="22.4" height="22.4" rx="2.3"/><path d="M0.9 14L6.3 9Q7.3 8.1 8.3 9L22.2 22.8" stroke-linejoin="round" stroke-width="1.45"/><circle cx="18.3" cy="6" r="1.4" stroke-width="1.25"/></svg>
<div class="a" style="left:134.4px;top:6.0px;width:24px;height:24px;background:radial-gradient(closest-side,#fdfdfd 70%,rgba(253,253,253,0) 100%)"></div>
<svg style="left:136.9px;top:8.5px" width="19.2" height="19.2" viewBox="0 0 24 24" fill="none" stroke="#262626" stroke-width="1.3"><rect x="0.8" y="0.8" width="22.4" height="22.4" rx="2.3"/><path d="M0.9 14L6.3 9Q7.3 8.1 8.3 9L22.2 22.8" stroke-linejoin="round" stroke-width="1.45"/><circle cx="18.3" cy="6" r="1.4" stroke-width="1.25"/></svg>
<div class="a" style="left:160.00000000000003px;top:6.0px;width:24px;height:24px;background:radial-gradient(closest-side,#fdfdfd 70%,rgba(253,253,253,0) 100%)"></div>
<svg style="left:162.5px;top:8.5px" width="19.2" height="19.2" viewBox="0 0 24 24" fill="none" stroke="#262626" stroke-width="1.3"><rect x="0.8" y="0.8" width="22.4" height="22.4" rx="2.3"/><path d="M0.9 14L6.3 9Q7.3 8.1 8.3 9L22.2 22.8" stroke-linejoin="round" stroke-width="1.45"/><circle cx="18.3" cy="6" r="1.4" stroke-width="1.25"/></svg>
<div class="a" style="left:185.60000000000002px;top:6.0px;width:24px;height:24px;background:radial-gradient(closest-side,#fdfdfd 70%,rgba(253,253,253,0) 100%)"></div>
<svg style="left:188.1px;top:8.5px" width="19.2" height="19.2" viewBox="0 0 24 24" fill="none" stroke="#262626" stroke-width="1.3"><rect x="0.8" y="0.8" width="22.4" height="22.4" rx="2.3"/><path d="M0.9 14L6.3 9Q7.3 8.1 8.3 9L22.2 22.8" stroke-linejoin="round" stroke-width="1.45"/><circle cx="18.3" cy="6" r="1.4" stroke-width="1.25"/></svg>
<div class="a" style="left:211.20000000000002px;top:6.0px;width:24px;height:24px;background:radial-gradient(closest-side,#fdfdfd 70%,rgba(253,253,253,0) 100%)"></div>
<svg style="left:213.7px;top:8.5px" width="19.2" height="19.2" viewBox="0 0 24 24" fill="none" stroke="#262626" stroke-width="1.3"><rect x="0.8" y="0.8" width="22.4" height="22.4" rx="2.3"/><path d="M0.9 14L6.3 9Q7.3 8.1 8.3 9L22.2 22.8" stroke-linejoin="round" stroke-width="1.45"/><circle cx="18.3" cy="6" r="1.4" stroke-width="1.25"/></svg>
<div class="a" style="left:236.8px;top:6.0px;width:24px;height:24px;background:radial-gradient(closest-side,#fdfdfd 70%,rgba(253,253,253,0) 100%)"></div>
<svg style="left:239.3px;top:8.5px" width="19.2" height="19.2" viewBox="0 0 24 24" fill="none" stroke="#262626" stroke-width="1.3"><rect x="0.8" y="0.8" width="22.4" height="22.4" rx="2.3"/><path d="M0.9 14L6.3 9Q7.3 8.1 8.3 9L22.2 22.8" stroke-linejoin="round" stroke-width="1.45"/><circle cx="18.3" cy="6" r="1.4" stroke-width="1.25"/></svg>
<div class="a" style="left:262.4px;top:6.0px;width:24px;height:24px;background:radial-gradient(closest-side,#fdfdfd 70%,rgba(253,253,253,0) 100%)"></div>
<svg style="left:264.9px;top:8.5px" width="19.2" height="19.2" viewBox="0 0 24 24" fill="none" stroke="#262626" stroke-width="1.3"><rect x="0.8" y="0.8" width="22.4" height="22.4" rx="2.3"/><path d="M0.9 14L6.3 9Q7.3 8.1 8.3 9L22.2 22.8" stroke-linejoin="round" stroke-width="1.45"/><circle cx="18.3" cy="6" r="1.4" stroke-width="1.25"/></svg>
<div class="a" style="left:288.0px;top:6.0px;width:24px;height:24px;background:radial-gradient(closest-side,#fdfdfd 70%,rgba(253,253,253,0) 100%)"></div>
<svg style="left:290.5px;top:8.5px" width="19.2" height="19.2" viewBox="0 0 24 24" fill="none" stroke="#262626" stroke-width="1.3"><rect x="0.8" y="0.8" width="22.4" height="22.4" rx="2.3"/><path d="M0.9 14L6.3 9Q7.3 8.1 8.3 9L22.2 22.8" stroke-linejoin="round" stroke-width="1.45"/><circle cx="18.3" cy="6" r="1.4" stroke-width="1.25"/></svg>
<div class="a" style="left:313.6px;top:6.0px;width:24px;height:24px;background:radial-gradient(closest-side,#fdfdfd 70%,rgba(253,253,253,0) 100%)"></div>
<svg style="left:316.1px;top:8.5px" width="19.2" height="19.2" viewBox="0 0 24 24" fill="none" stroke="#262626" stroke-width="1.3"><rect x="0.8" y="0.8" width="22.4" height="22.4" rx="2.3"/><path d="M0.9 14L6.3 9Q7.3 8.1 8.3 9L22.2 22.8" stroke-linejoin="round" stroke-width="1.45"/><circle cx="18.3" cy="6" r="1.4" stroke-width="1.25"/></svg>
<div class="a" style="left:6.4px;top:31.6px;width:24px;height:24px;background:radial-gradient(closest-side,#fdfdfd 70%,rgba(253,253,253,0) 100%)"></div>
<svg style="left:8.9px;top:34.1px" width="19.2" height="19.2" viewBox="0 0 24 24" fill="none" stroke="#262626" stroke-width="1.3"><rect x="0.8" y="0.8" width="22.4" height="22.4" rx="2.3"/><path d="M0.9 14L6.3 9Q7.3 8.1 8.3 9L22.2 22.8" stroke-linejoin="round" stroke-width="1.45"/><circle cx="18.3" cy="6" r="1.4" stroke-width="1.25"/></svg>
<div class="a" style="left:32.0px;top:31.6px;width:24px;height:24px;background:radial-gradient(closest-side,#fdfdfd 70%,rgba(253,253,253,0) 100%)"></div>
<svg style="left:34.5px;top:34.1px" width="19.2" height="19.2" viewBox="0 0 24 24" fill="none" stroke="#262626" stroke-width="1.3"><rect x="0.8" y="0.8" width="22.4" height="22.4" rx="2.3"/><path d="M0.9 14L6.3 9Q7.3 8.1 8.3 9L22.2 22.8" stroke-linejoin="round" stroke-width="1.45"/><circle cx="18.3" cy="6" r="1.4" stroke-width="1.25"/></svg>
<div class="a" style="left:57.6px;top:31.6px;width:24px;height:24px;background:radial-gradient(closest-side,#fdfdfd 70%,rgba(253,253,253,0) 100%)"></div>
<svg style="left:60.1px;top:34.1px" width="19.2" height="19.2" viewBox="0 0 24 24" fill="none" stroke="#262626" stroke-width="1.3"><rect x="0.8" y="0.8" width="22.4" height="22.4" rx="2.3"/><path d="M0.9 14L6.3 9Q7.3 8.1 8.3 9L22.2 22.8" stroke-linejoin="round" stroke-width="1.45"/><circle cx="18.3" cy="6" r="1.4" stroke-width="1.25"/></svg>
<div class="a" style="left:83.20000000000002px;top:31.6px;width:24px;height:24px;background:radial-gradient(closest-side,#fdfdfd 70%,rgba(253,253,253,0) 100%)"></div>
<svg style="left:85.7px;top:34.1px" width="19.2" height="19.2" viewBox="0 0 24 24" fill="none" stroke="#262626" stroke-width="1.3"><rect x="0.8" y="0.8" width="22.4" height="22.4" rx="2.3"/><path d="M0.9 14L6.3 9Q7.3 8.1 8.3 9L22.2 22.8" stroke-linejoin="round" stroke-width="1.45"/><circle cx="18.3" cy="6" r="1.4" stroke-width="1.25"/></svg>
<div class="a" style="left:108.80000000000001px;top:31.6px;width:24px;height:24px;background:radial-gradient(closest-side,#fdfdfd 70%,rgba(253,253,253,0) 100%)"></div>
<svg style="left:111.3px;top:34.1px" width="19.2" height="19.2" viewBox="0 0 24 24" fill="none" stroke="#262626" stroke-width="1.3"><rect x="0.8" y="0.8" width="22.4" height="22.4" rx="2.3"/><path d="M0.9 14L6.3 9Q7.3 8.1 8.3 9L22.2 22.8" stroke-linejoin="round" stroke-width="1.45"/><circle cx="18.3" cy="6" r="1.4" stroke-width="1.25"/></svg>
<div class="a" style="left:134.4px;top:31.6px;width:24px;height:24px;background:radial-gradient(closest-side,#fdfdfd 70%,rgba(253,253,253,0) 100%)"></div>
<svg style="left:136.9px;top:34.1px" width="19.2" height="19.2" viewBox="0 0 24 24" fill="none" stroke="#262626" stroke-width="1.3"><rect x="0.8" y="0.8" width="22.4" height="22.4" rx="2.3"/><path d="M0.9 14L6.3 9Q7.3 8.1 8.3 9L22.2 22.8" stroke-linejoin="round" stroke-width="1.45"/><circle cx="18.3" cy="6" r="1.4" stroke-width="1.25"/></svg>
<div class="a" style="left:160.00000000000003px;top:31.6px;width:24px;height:24px;background:radial-gradient(closest-side,#fdfdfd 70%,rgba(253,253,253,0) 100%)"></div>
<svg style="left:162.5px;top:34.1px" width="19.2" height="19.2" viewBox="0 0 24 24" fill="none" stroke="#262626" stroke-width="1.3"><rect x="0.8" y="0.8" width="22.4" height="22.4" rx="2.3"/><path d="M0.9 14L6.3 9Q7.3 8.1 8.3 9L22.2 22.8" stroke-linejoin="round" stroke-width="1.45"/><circle cx="18.3" cy="6" r="1.4" stroke-width="1.25"/></svg>
<div class="a" style="left:185.60000000000002px;top:31.6px;width:24px;height:24px;background:radial-gradient(closest-side,#fdfdfd 70%,rgba(253,253,253,0) 100%)"></div>
<svg style="left:188.1px;top:34.1px" width="19.2" height="19.2" viewBox="0 0 24 24" fill="none" stroke="#262626" stroke-width="1.3"><rect x="0.8" y="0.8" width="22.4" height="22.4" rx="2.3"/><path d="M0.9 14L6.3 9Q7.3 8.1 8.3 9L22.2 22.8" stroke-linejoin="round" stroke-width="1.45"/><circle cx="18.3" cy="6" r="1.4" stroke-width="1.25"/></svg>
<div class="a" style="left:211.20000000000002px;top:31.6px;width:24px;height:24px;background:radial-gradient(closest-side,#fdfdfd 70%,rgba(253,253,253,0) 100%)"></div>
<svg style="left:213.7px;top:34.1px" width="19.2" height="19.2" viewBox="0 0 24 24" fill="none" stroke="#262626" stroke-width="1.3"><rect x="0.8" y="0.8" width="22.4" height="22.4" rx="2.3"/><path d="M0.9 14L6.3 9Q7.3 8.1 8.3 9L22.2 22.8" stroke-linejoin="round" stroke-width="1.45"/><circle cx="18.3" cy="6" r="1.4" stroke-width="1.25"/></svg>
<div class="a" style="left:236.8px;top:31.6px;width:24px;height:24px;background:radial-gradient(closest-side,#fdfdfd 70%,rgba(253,253,253,0) 100%)"></div>
<svg style="left:239.3px;top:34.1px" width="19.2" height="19.2" viewBox="0 0 24 24" fill="none" stroke="#262626" stroke-width="1.3"><rect x="0.8" y="0.8" width="22.4" height="22.4" rx="2.3"/><path d="M0.9 14L6.3 9Q7.3 8.1 8.3 9L22.2 22.8" stroke-linejoin="round" stroke-width="1.45"/><circle cx="18.3" cy="6" r="1.4" stroke-width="1.25"/></svg>
<div class="a" style="left:262.4px;top:31.6px;width:24px;height:24px;background:radial-gradient(closest-side,#fdfdfd 70%,rgba(253,253,253,0) 100%)"></div>
<svg style="left:264.9px;top:34.1px" width="19.2" height="19.2" viewBox="0 0 24 24" fill="none" stroke="#262626" stroke-width="1.3"><rect x="0.8" y="0.8" width="22.4" height="22.4" rx="2.3"/><path d="M0.9 14L6.3 9Q7.3 8.1 8.3 9L22.2 22.8" stroke-linejoin="round" stroke-width="1.45"/><circle cx="18.3" cy="6" r="1.4" stroke-width="1.25"/></svg>
<div class="a" style="left:288.0px;top:31.6px;width:24px;height:24px;background:radial-gradient(closest-side,#fdfdfd 70%,rgba(253,253,253,0) 100%)"></div>
<svg style="left:290.5px;top:34.1px" width="19.2" height="19.2" viewBox="0 0 24 24" fill="none" stroke="#262626" stroke-width="1.3"><rect x="0.8" y="0.8" width="22.4" height="22.4" rx="2.3"/><path d="M0.9 14L6.3 9Q7.3 8.1 8.3 9L22.2 22.8" stroke-linejoin="round" stroke-width="1.45"/><circle cx="18.3" cy="6" r="1.4" stroke-width="1.25"/></svg>
<div class="a" style="left:313.6px;top:31.6px;width:24px;height:24px;background:radial-gradient(closest-side,#fdfdfd 70%,rgba(253,253,253,0) 100%)"></div>
<svg style="left:316.1px;top:34.1px" width="19.2" height="19.2" viewBox="0 0 24 24" fill="none" stroke="#262626" stroke-width="1.3"><rect x="0.8" y="0.8" width="22.4" height="22.4" rx="2.3"/><path d="M0.9 14L6.3 9Q7.3 8.1 8.3 9L22.2 22.8" stroke-linejoin="round" stroke-width="1.45"/><circle cx="18.3" cy="6" r="1.4" stroke-width="1.25"/></svg>
<div class="a" style="left:6.4px;top:57.2px;width:24px;height:24px;background:radial-gradient(closest-side,#fdfdfd 70%,rgba(253,253,253,0) 100%)"></div>
<svg style="left:8.9px;top:59.7px" width="19.2" height="19.2" viewBox="0 0 24 24" fill="none" stroke="#262626" stroke-width="1.3"><rect x="0.8" y="0.8" width="22.4" height="22.4" rx="2.3"/><path d="M0.9 14L6.3 9Q7.3 8.1 8.3 9L22.2 22.8" stroke-linejoin="round" stroke-width="1.45"/><circle cx="18.3" cy="6" r="1.4" stroke-width="1.25"/></svg>
<div class="a" style="left:32.0px;top:57.2px;width:24px;height:24px;background:radial-gradient(closest-side,#fdfdfd 70%,rgba(253,253,253,0) 100%)"></div>
<svg style="left:34.5px;top:59.7px" width="19.2" height="19.2" viewBox="0 0 24 24" fill="none" stroke="#262626" stroke-width="1.3"><rect x="0.8" y="0.8" width="22.4" height="22.4" rx="2.3"/><path d="M0.9 14L6.3 9Q7.3 8.1 8.3 9L22.2 22.8" stroke-linejoin="round" stroke-width="1.45"/><circle cx="18.3" cy="6" r="1.4" stroke-width="1.25"/></svg>
<div class="a" style="left:57.6px;top:57.2px;width:24px;height:24px;background:radial-gradient(closest-side,#fdfdfd 70%,rgba(253,253,253,0) 100%)"></div>
<svg style="left:60.1px;top:59.7px" width="19.2" height="19.2" viewBox="0 0 24 24" fill="none" stroke="#262626" stroke-width="1.3"><rect x="0.8" y="0.8" width="22.4" height="22.4" rx="2.3"/><path d="M0.9 14L6.3 9Q7.3 8.1 8.3 9L22.2 22.8" stroke-linejoin="round" stroke-width="1.45"/><circle cx="18.3" cy="6" r="1.4" stroke-width="1.25"/></svg>
<div class="a" style="left:83.20000000000002px;top:57.2px;width:24px;height:24px;background:radial-gradient(closest-side,#fdfdfd 70%,rgba(253,253,253,0) 100%)"></div>
<svg style="left:85.7px;top:59.7px" width="19.2" height="19.2" viewBox="0 0 24 24" fill="none" stroke="#262626" stroke-width="1.3"><rect x="0.8" y="0.8" width="22.4" height="22.4" rx="2.3"/><path d="M0.9 14L6.3 9Q7.3 8.1 8.3 9L22.2 22.8" stroke-linejoin="round" stroke-width="1.45"/><circle cx="18.3" cy="6" r="1.4" stroke-width="1.25"/></svg>
<div class="a" style="left:108.80000000000001px;top:57.2px;width:24px;height:24px;background:radial-gradient(closest-side,#fdfdfd 70%,rgba(253,253,253,0) 100%)"></div>
<svg style="left:111.3px;top:59.7px" width="19.2" height="19.2" viewBox="0 0 24 24" fill="none" stroke="#262626" stroke-width="1.3"><rect x="0.8" y="0.8" width="22.4" height="22.4" rx="2.3"/><path d="M0.9 14L6.3 9Q7.3 8.1 8.3 9L22.2 22.8" stroke-linejoin="round" stroke-width="1.45"/><circle cx="18.3" cy="6" r="1.4" stroke-width="1.25"/></svg>
<div class="a" style="left:134.4px;top:57.2px;width:24px;height:24px;background:radial-gradient(closest-side,#fdfdfd 70%,rgba(253,253,253,0) 100%)"></div>
<svg style="left:136.9px;top:59.7px" width="19.2" height="19.2" viewBox="0 0 24 24" fill="none" stroke="#262626" stroke-width="1.3"><rect x="0.8" y="0.8" width="22.4" height="22.4" rx="2.3"/><path d="M0.9 14L6.3 9Q7.3 8.1 8.3 9L22.2 22.8" stroke-linejoin="round" stroke-width="1.45"/><circle cx="18.3" cy="6" r="1.4" stroke-width="1.25"/></svg>
<div class="a" style="left:160.00000000000003px;top:57.2px;width:24px;height:24px;background:radial-gradient(closest-side,#fdfdfd 70%,rgba(253,253,253,0) 100%)"></div>
<svg style="left:162.5px;top:59.7px" width="19.2" height="19.2" viewBox="0 0 24 24" fill="none" stroke="#262626" stroke-width="1.3"><rect x="0.8" y="0.8" width="22.4" height="22.4" rx="2.3"/><path d="M0.9 14L6.3 9Q7.3 8.1 8.3 9L22.2 22.8" stroke-linejoin="round" stroke-width="1.45"/><circle cx="18.3" cy="6" r="1.4" stroke-width="1.25"/></svg>
<div class="a" style="left:185.60000000000002px;top:57.2px;width:24px;height:24px;background:radial-gradient(closest-side,#fdfdfd 70%,rgba(253,253,253,0) 100%)"></div>
<svg style="left:188.1px;top:59.7px" width="19.2" height="19.2" viewBox="0 0 24 24" fill="none" stroke="#262626" stroke-width="1.3"><rect x="0.8" y="0.8" width="22.4" height="22.4" rx="2.3"/><path d="M0.9 14L6.3 9Q7.3 8.1 8.3 9L22.2 22.8" stroke-linejoin="round" stroke-width="1.45"/><circle cx="18.3" cy="6" r="1.4" stroke-width="1.25"/></svg>
<div class="a" style="left:211.20000000000002px;top:57.2px;width:24px;height:24px;background:radial-gradient(closest-side,#fdfdfd 70%,rgba(253,253,253,0) 100%)"></div>
<svg style="left:213.7px;top:59.7px" width="19.2" height="19.2" viewBox="0 0 24 24" fill="none" stroke="#262626" stroke-width="1.3"><rect x="0.8" y="0.8" width="22.4" height="22.4" rx="2.3"/><path d="M0.9 14L6.3 9Q7.3 8.1 8.3 9L22.2 22.8" stroke-linejoin="round" stroke-width="1.45"/><circle cx="18.3" cy="6" r="1.4" stroke-width="1.25"/></svg>
<div class="a" style="left:236.8px;top:57.2px;width:24px;height:24px;background:radial-gradient(closest-side,#fdfdfd 70%,rgba(253,253,253,0) 100%)"></div>
<svg style="left:239.3px;top:59.7px" width="19.2" height="19.2" viewBox="0 0 24 24" fill="none" stroke="#262626" stroke-width="1.3"><rect x="0.8" y="0.8" width="22.4" height="22.4" rx="2.3"/><path d="M0.9 14L6.3 9Q7.3 8.1 8.3 9L22.2 22.8" stroke-linejoin="round" stroke-width="1.45"/><circle cx="18.3" cy="6" r="1.4" stroke-width="1.25"/></svg>
<div class="a" style="left:262.4px;top:57.2px;width:24px;height:24px;background:radial-gradient(closest-side,#fdfdfd 70%,rgba(253,253,253,0) 100%)"></div>
<svg style="left:264.9px;top:59.7px" width="19.2" height="19.2" viewBox="0 0 24 24" fill="none" stroke="#262626" stroke-width="1.3"><rect x="0.8" y="0.8" width="22.4" height="22.4" rx="2.3"/><path d="M0.9 14L6.3 9Q7.3 8.1 8.3 9L22.2 22.8" stroke-linejoin="round" stroke-width="1.45"/><circle cx="18.3" cy="6" r="1.4" stroke-width="1.25"/></svg>
<div class="a" style="left:288.0px;top:57.2px;width:24px;height:24px;background:radial-gradient(closest-side,#fdfdfd 70%,rgba(253,253,253,0) 100%)"></div>
<svg style="left:290.5px;top:59.7px" width="19.2" height="19.2" viewBox="0 0 24 24" fill="none" stroke="#262626" stroke-width="1.3"><rect x="0.8" y="0.8" width="22.4" height="22.4" rx="2.3"/><path d="M0.9 14L6.3 9Q7.3 8.1 8.3 9L22.2 22.8" stroke-linejoin="round" stroke-width="1.45"/><circle cx="18.3" cy="6" r="1.4" stroke-width="1.25"/></svg>
<div class="a" style="left:313.6px;top:57.2px;width:24px;height:24px;background:radial-gradient(closest-side,#fdfdfd 70%,rgba(253,253,253,0) 100%)"></div>
<svg style="left:316.1px;top:59.7px" width="19.2" height="19.2" viewBox="0 0 24 24" fill="none" stroke="#262626" stroke-width="1.3"><rect x="0.8" y="0.8" width="22.4" height="22.4" rx="2.3"/><path d="M0.9 14L6.3 9Q7.3 8.1 8.3 9L22.2 22.8" stroke-linejoin="round" stroke-width="1.45"/><circle cx="18.3" cy="6" r="1.4" stroke-width="1.25"/></svg>
<div class="a" style="left:6.4px;top:82.80000000000001px;width:24px;height:24px;background:radial-gradient(closest-side,#fdfdfd 70%,rgba(253,253,253,0) 100%)"></div>
<svg style="left:8.9px;top:85.3px" width="19.2" height="19.2" viewBox="0 0 24 24" fill="none" stroke="#262626" stroke-width="1.3"><rect x="0.8" y="0.8" width="22.4" height="22.4" rx="2.3"/><path d="M0.9 14L6.3 9Q7.3 8.1 8.3 9L22.2 22.8" stroke-linejoin="round" stroke-width="1.45"/><circle cx="18.3" cy="6" r="1.4" stroke-width="1.25"/></svg>
<div class="a" style="left:32.0px;top:82.80000000000001px;width:24px;height:24px;background:radial-gradient(closest-side,#fdfdfd 70%,rgba(253,253,253,0) 100%)"></div>
<svg style="left:34.5px;top:85.3px" width="19.2" height="19.2" viewBox="0 0 24 24" fill="none" stroke="#262626" stroke-width="1.3"><rect x="0.8" y="0.8" width="22.4" height="22.4" rx="2.3"/><path d="M0.9 14L6.3 9Q7.3 8.1 8.3 9L22.2 22.8" stroke-linejoin="round" stroke-width="1.45"/><circle cx="18.3" cy="6" r="1.4" stroke-width="1.25"/></svg>
<div class="a" style="left:57.6px;top:82.80000000000001px;width:24px;height:24px;background:radial-gradient(closest-side,#fdfdfd 70%,rgba(253,253,253,0) 100%)"></div>
<svg style="left:60.1px;top:85.3px" width="19.2" height="19.2" viewBox="0 0 24 24" fill="none" stroke="#262626" stroke-width="1.3"><rect x="0.8" y="0.8" width="22.4" height="22.4" rx="2.3"/><path d="M0.9 14L6.3 9Q7.3 8.1 8.3 9L22.2 22.8" stroke-linejoin="round" stroke-width="1.45"/><circle cx="18.3" cy="6" r="1.4" stroke-width="1.25"/></svg>
<div class="a" style="left:83.20000000000002px;top:82.80000000000001px;width:24px;height:24px;background:radial-gradient(closest-side,#fdfdfd 70%,rgba(253,253,253,0) 100%)"></div>
<svg style="left:85.7px;top:85.3px" width="19.2" height="19.2" viewBox="0 0 24 24" fill="none" stroke="#262626" stroke-width="1.3"><rect x="0.8" y="0.8" width="22.4" height="22.4" rx="2.3"/><path d="M0.9 14L6.3 9Q7.3 8.1 8.3 9L22.2 22.8" stroke-linejoin="round" stroke-width="1.45"/><circle cx="18.3" cy="6" r="1.4" stroke-width="1.25"/></svg>
<div class="a" style="left:108.80000000000001px;top:82.80000000000001px;width:24px;height:24px;background:radial-gradient(closest-side,#fdfdfd 70%,rgba(253,253,253,0) 100%)"></div>
<svg style="left:111.3px;top:85.3px" width="19.2" height="19.2" viewBox="0 0 24 24" fill="none" stroke="#262626" stroke-width="1.3"><rect x="0.8" y="0.8" width="22.4" height="22.4" rx="2.3"/><path d="M0.9 14L6.3 9Q7.3 8.1 8.3 9L22.2 22.8" stroke-linejoin="round" stroke-width="1.45"/><circle cx="18.3" cy="6" r="1.4" stroke-width="1.25"/></svg>
<div class="a" style="left:134.4px;top:82.80000000000001px;width:24px;height:24px;background:radial-gradient(closest-side,#fdfdfd 70%,rgba(253,253,253,0) 100%)"></div>
<svg style="left:136.9px;top:85.3px" width="19.2" height="19.2" viewBox="0 0 24 24" fill="none" stroke="#262626" stroke-width="1.3"><rect x="0.8" y="0.8" width="22.4" height="22.4" rx="2.3"/><path d="M0.9 14L6.3 9Q7.3 8.1 8.3 9L22.2 22.8" stroke-linejoin="round" stroke-width="1.45"/><circle cx="18.3" cy="6" r="1.4" stroke-width="1.25"/></svg>
<div class="a" style="left:160.00000000000003px;top:82.80000000000001px;width:24px;height:24px;background:radial-gradient(closest-side,#fdfdfd 70%,rgba(253,253,253,0) 100%)"></div>
<svg style="left:162.5px;top:85.3px" width="19.2" height="19.2" viewBox="0 0 24 24" fill="none" stroke="#262626" stroke-width="1.3"><rect x="0.8" y="0.8" width="22.4" height="22.4" rx="2.3"/><path d="M0.9 14L6.3 9Q7.3 8.1 8.3 9L22.2 22.8" stroke-linejoin="round" stroke-width="1.45"/><circle cx="18.3" cy="6" r="1.4" stroke-width="1.25"/></svg>
<div class="a" style="left:185.60000000000002px;top:82.80000000000001px;width:24px;height:24px;background:radial-gradient(closest-side,#fdfdfd 70%,rgba(253,253,253,0) 100%)"></div>
<svg style="left:188.1px;top:85.3px" width="19.2" height="19.2" viewBox="0 0 24 24" fill="none" stroke="#262626" stroke-width="1.3"><rect x="0.8" y="0.8" width="22.4" height="22.4" rx="2.3"/><path d="M0.9 14L6.3 9Q7.3 8.1 8.3 9L22.2 22.8" stroke-linejoin="round" stroke-width="1.45"/><circle cx="18.3" cy="6" r="1.4" stroke-width="1.25"/></svg>
<div class="a" style="left:211.20000000000002px;top:82.80000000000001px;width:24px;height:24px;background:radial-gradient(closest-side,#fdfdfd 70%,rgba(253,253,253,0) 100%)"></div>
<svg style="left:213.7px;top:85.3px" width="19.2" height="19.2" viewBox="0 0 24 24" fill="none" stroke="#262626" stroke-width="1.3"><rect x="0.8" y="0.8" width="22.4" height="22.4" rx="2.3"/><path d="M0.9 14L6.3 9Q7.3 8.1 8.3 9L22.2 22.8" stroke-linejoin="round" stroke-width="1.45"/><circle cx="18.3" cy="6" r="1.4" stroke-width="1.25"/></svg>
<div class="a" style="left:236.8px;top:82.80000000000001px;width:24px;height:24px;background:radial-gradient(closest-side,#fdfdfd 70%,rgba(253,253,253,0) 100%)"></div>
<svg style="left:239.3px;top:85.3px" width="19.2" height="19.2" viewBox="0 0 24 24" fill="none" stroke="#262626" stroke-width="1.3"><rect x="0.8" y="0.8" width="22.4" height="22.4" rx="2.3"/><path d="M0.9 14L6.3 9Q7.3 8.1 8.3 9L22.2 22.8" stroke-linejoin="round" stroke-width="1.45"/><circle cx="18.3" cy="6" r="1.4" stroke-width="1.25"/></svg>
<div class="a" style="left:262.4px;top:82.80000000000001px;width:24px;height:24px;background:radial-gradient(closest-side,#fdfdfd 70%,rgba(253,253,253,0) 100%)"></div>
<svg style="left:264.9px;top:85.3px" width="19.2" height="19.2" viewBox="0 0 24 24" fill="none" stroke="#262626" stroke-width="1.3"><rect x="0.8" y="0.8" width="22.4" height="22.4" rx="2.3"/><path d="M0.9 14L6.3 9Q7.3 8.1 8.3 9L22.2 22.8" stroke-linejoin="round" stroke-width="1.45"/><circle cx="18.3" cy="6" r="1.4" stroke-width="1.25"/></svg>
<div class="a" style="left:288.0px;top:82.80000000000001px;width:24px;height:24px;background:radial-gradient(closest-side,#fdfdfd 70%,rgba(253,253,253,0) 100%)"></div>
<svg style="left:290.5px;top:85.3px" width="19.2" height="19.2" viewBox="0 0 24 24" fill="none" stroke="#262626" stroke-width="1.3"><rect x="0.8" y="0.8" width="22.4" height="22.4" rx="2.3"/><path d="M0.9 14L6.3 9Q7.3 8.1 8.3 9L22.2 22.8" stroke-linejoin="round" stroke-width="1.45"/><circle cx="18.3" cy="6" r="1.4" stroke-width="1.25"/></svg>
<div class="a" style="left:313.6px;top:82.80000000000001px;width:24px;height:24px;background:radial-gradient(closest-side,#fdfdfd 70%,rgba(253,253,253,0) 100%)"></div>
<svg style="left:316.1px;top:85.3px" width="19.2" height="19.2" viewBox="0 0 24 24" fill="none" stroke="#262626" stroke-width="1.3"><rect x="0.8" y="0.8" width="22.4" height="22.4" rx="2.3"/><path d="M0.9 14L6.3 9Q7.3 8.1 8.3 9L22.2 22.8" stroke-linejoin="round" stroke-width="1.45"/><circle cx="18.3" cy="6" r="1.4" stroke-width="1.25"/></svg>
<div class="a" style="left:6.4px;top:108.4px;width:24px;height:24px;background:radial-gradient(closest-side,#fdfdfd 70%,rgba(253,253,253,0) 100%)"></div>
<svg style="left:8.9px;top:110.9px" width="19.2" height="19.2" viewBox="0 0 24 24" fill="none" stroke="#262626" stroke-width="1.3"><rect x="0.8" y="0.8" width="22.4" height="22.4" rx="2.3"/><path d="M0.9 14L6.3 9Q7.3 8.1 8.3 9L22.2 22.8" stroke-linejoin="round" stroke-width="1.45"/><circle cx="18.3" cy="6" r="1.4" stroke-width="1.25"/></svg>
<div class="a" style="left:32.0px;top:108.4px;width:24px;height:24px;background:radial-gradient(closest-side,#fdfdfd 70%,rgba(253,253,253,0) 100%)"></div>
<svg style="left:34.5px;top:110.9px" width="19.2" height="19.2" viewBox="0 0 24 24" fill="none" stroke="#262626" stroke-width="1.3"><rect x="0.8" y="0.8" width="22.4" height="22.4" rx="2.3"/><path d="M0.9 14L6.3 9Q7.3 8.1 8.3 9L22.2 22.8" stroke-linejoin="round" stroke-width="1.45"/><circle cx="18.3" cy="6" r="1.4" stroke-width="1.25"/></svg>
<div class="a" style="left:57.6px;top:108.4px;width:24px;height:24px;background:radial-gradient(closest-side,#fdfdfd 70%,rgba(253,253,253,0) 100%)"></div>
<svg style="left:60.1px;top:110.9px" width="19.2" height="19.2" viewBox="0 0 24 24" fill="none" stroke="#262626" stroke-width="1.3"><rect x="0.8" y="0.8" width="22.4" height="22.4" rx="2.3"/><path d="M0.9 14L6.3 9Q7.3 8.1 8.3 9L22.2 22.8" stroke-linejoin="round" stroke-width="1.45"/><circle cx="18.3" cy="6" r="1.4" stroke-width="1.25"/></svg>
<div class="a" style="left:83.20000000000002px;top:108.4px;width:24px;height:24px;background:radial-gradient(closest-side,#fdfdfd 70%,rgba(253,253,253,0) 100%)"></div>
<svg style="left:85.7px;top:110.9px" width="19.2" height="19.2" viewBox="0 0 24 24" fill="none" stroke="#262626" stroke-width="1.3"><rect x="0.8" y="0.8" width="22.4" height="22.4" rx="2.3"/><path d="M0.9 14L6.3 9Q7.3 8.1 8.3 9L22.2 22.8" stroke-linejoin="round" stroke-width="1.45"/><circle cx="18.3" cy="6" r="1.4" stroke-width="1.25"/></svg>
<div class="a" style="left:108.80000000000001px;top:108.4px;width:24px;height:24px;background:radial-gradient(closest-side,#fdfdfd 70%,rgba(253,253,253,0) 100%)"></div>
<svg style="left:111.3px;top:110.9px" width="19.2" height="19.2" viewBox="0 0 24 24" fill="none" stroke="#262626" stroke-width="1.3"><rect x="0.8" y="0.8" width="22.4" height="22.4" rx="2.3"/><path d="M0.9 14L6.3 9Q7.3 8.1 8.3 9L22.2 22.8" stroke-linejoin="round" stroke-width="1.45"/><circle cx="18.3" cy="6" r="1.4" stroke-width="1.25"/></svg>
<div class="a" style="left:134.4px;top:108.4px;width:24px;height:24px;background:radial-gradient(closest-side,#fdfdfd 70%,rgba(253,253,253,0) 100%)"></div>
<svg style="left:136.9px;top:110.9px" width="19.2" height="19.2" viewBox="0 0 24 24" fill="none" stroke="#262626" stroke-width="1.3"><rect x="0.8" y="0.8" width="22.4" height="22.4" rx="2.3"/><path d="M0.9 14L6.3 9Q7.3 8.1 8.3 9L22.2 22.8" stroke-linejoin="round" stroke-width="1.45"/><circle cx="18.3" cy="6" r="1.4" stroke-width="1.25"/></svg>
<div class="a" style="left:160.00000000000003px;top:108.4px;width:24px;height:24px;background:radial-gradient(closest-side,#fdfdfd 70%,rgba(253,253,253,0) 100%)"></div>
<svg style="left:162.5px;top:110.9px" width="19.2" height="19.2" viewBox="0 0 24 24" fill="none" stroke="#262626" stroke-width="1.3"><rect x="0.8" y="0.8" width="22.4" height="22.4" rx="2.3"/><path d="M0.9 14L6.3 9Q7.3 8.1 8.3 9L22.2 22.8" stroke-linejoin="round" stroke-width="1.45"/><circle cx="18.3" cy="6" r="1.4" stroke-width="1.25"/></svg>
<div class="a" style="left:185.60000000000002px;top:108.4px;width:24px;height:24px;background:radial-gradient(closest-side,#fdfdfd 70%,rgba(253,253,253,0) 100%)"></div>
<svg style="left:188.1px;top:110.9px" width="19.2" height="19.2" viewBox="0 0 24 24" fill="none" stroke="#262626" stroke-width="1.3"><rect x="0.8" y="0.8" width="22.4" height="22.4" rx="2.3"/><path d="M0.9 14L6.3 9Q7.3 8.1 8.3 9L22.2 22.8" stroke-linejoin="round" stroke-width="1.45"/><circle cx="18.3" cy="6" r="1.4" stroke-width="1.25"/></svg>
<div class="a" style="left:211.20000000000002px;top:108.4px;width:24px;height:24px;background:radial-gradient(closest-side,#fdfdfd 70%,rgba(253,253,253,0) 100%)"></div>
<svg style="left:213.7px;top:110.9px" width="19.2" height="19.2" viewBox="0 0 24 24" fill="none" stroke="#262626" stroke-width="1.3"><rect x="0.8" y="0.8" width="22.4" height="22.4" rx="2.3"/><path d="M0.9 14L6.3 9Q7.3 8.1 8.3 9L22.2 22.8" stroke-linejoin="round" stroke-width="1.45"/><circle cx="18.3" cy="6" r="1.4" stroke-width="1.25"/></svg>
<div class="a" style="left:236.8px;top:108.4px;width:24px;height:24px;background:radial-gradient(closest-side,#fdfdfd 70%,rgba(253,253,253,0) 100%)"></div>
<svg style="left:239.3px;top:110.9px" width="19.2" height="19.2" viewBox="0 0 24 24" fill="none" stroke="#262626" stroke-width="1.3"><rect x="0.8" y="0.8" width="22.4" height="22.4" rx="2.3"/><path d="M0.9 14L6.3 9Q7.3 8.1 8.3 9L22.2 22.8" stroke-linejoin="round" stroke-width="1.45"/><circle cx="18.3" cy="6" r="1.4" stroke-width="1.25"/></svg>
<div class="a" style="left:262.4px;top:108.4px;width:24px;height:24px;background:radial-gradient(closest-side,#fdfdfd 70%,rgba(253,253,253,0) 100%)"></div>
<svg style="left:264.9px;top:110.9px" width="19.2" height="19.2" viewBox="0 0 24 24" fill="none" stroke="#262626" stroke-width="1.3"><rect x="0.8" y="0.8" width="22.4" height="22.4" rx="2.3"/><path d="M0.9 14L6.3 9Q7.3 8.1 8.3 9L22.2 22.8" stroke-linejoin="round" stroke-width="1.45"/><circle cx="18.3" cy="6" r="1.4" stroke-width="1.25"/></svg>
<div class="a" style="left:288.0px;top:108.4px;width:24px;height:24px;background:radial-gradient(closest-side,#fdfdfd 70%,rgba(253,253,253,0) 100%)"></div>
<svg style="left:290.5px;top:110.9px" width="19.2" height="19.2" viewBox="0 0 24 24" fill="none" stroke="#262626" stroke-width="1.3"><rect x="0.8" y="0.8" width="22.4" height="22.4" rx="2.3"/><path d="M0.9 14L6.3 9Q7.3 8.1 8.3 9L22.2 22.8" stroke-linejoin="round" stroke-width="1.45"/><circle cx="18.3" cy="6" r="1.4" stroke-width="1.25"/></svg>
<div class="a" style="left:313.6px;top:108.4px;width:24px;height:24px;background:radial-gradient(closest-side,#fdfdfd 70%,rgba(253,253,253,0) 100%)"></div>
<svg style="left:316.1px;top:110.9px" width="19.2" height="19.2" viewBox="0 0 24 24" fill="none" stroke="#262626" stroke-width="1.3"><rect x="0.8" y="0.8" width="22.4" height="22.4" rx="2.3"/><path d="M0.9 14L6.3 9Q7.3 8.1 8.3 9L22.2 22.8" stroke-linejoin="round" stroke-width="1.45"/><circle cx="18.3" cy="6" r="1.4" stroke-width="1.25"/></svg>
<div class="a" style="left:6.4px;top:134.0px;width:24px;height:24px;background:radial-gradient(closest-side,#fdfdfd 70%,rgba(253,253,253,0) 100%)"></div>
<svg style="left:8.9px;top:136.5px" width="19.2" height="19.2" viewBox="0 0 24 24" fill="none" stroke="#262626" stroke-width="1.3"><rect x="0.8" y="0.8" width="22.4" height="22.4" rx="2.3"/><path d="M0.9 14L6.3 9Q7.3 8.1 8.3 9L22.2 22.8" stroke-linejoin="round" stroke-width="1.45"/><circle cx="18.3" cy="6" r="1.4" stroke-width="1.25"/></svg>
<div class="a" style="left:32.0px;top:134.0px;width:24px;height:24px;background:radial-gradient(closest-side,#fdfdfd 70%,rgba(253,253,253,0) 100%)"></div>
<svg style="left:34.5px;top:136.5px" width="19.2" height="19.2" viewBox="0 0 24 24" fill="none" stroke="#262626" stroke-width="1.3"><rect x="0.8" y="0.8" width="22.4" height="22.4" rx="2.3"/><path d="M0.9 14L6.3 9Q7.3 8.1 8.3 9L22.2 22.8" stroke-linejoin="round" stroke-width="1.45"/><circle cx="18.3" cy="6" r="1.4" stroke-width="1.25"/></svg>
<div class="a" style="left:57.6px;top:134.0px;width:24px;height:24px;background:radial-gradient(closest-side,#fdfdfd 70%,rgba(253,253,253,0) 100%)"></div>
<svg style="left:60.1px;top:136.5px" width="19.2" height="19.2" viewBox="0 0 24 24" fill="none" stroke="#262626" stroke-width="1.3"><rect x="0.8" y="0.8" width="22.4" height="22.4" rx="2.3"/><path d="M0.9 14L6.3 9Q7.3 8.1 8.3 9L22.2 22.8" stroke-linejoin="round" stroke-width="1.45"/><circle cx="18.3" cy="6" r="1.4" stroke-width="1.25"/></svg>
<div class="a" style="left:83.20000000000002px;top:134.0px;width:24px;height:24px;background:radial-gradient(closest-side,#fdfdfd 70%,rgba(253,253,253,0) 100%)"></div>
<svg style="left:85.7px;top:136.5px" width="19.2" height="19.2" viewBox="0 0 24 24" fill="none" stroke="#262626" stroke-width="1.3"><rect x="0.8" y="0.8" width="22.4" height="22.4" rx="2.3"/><path d="M0.9 14L6.3 9Q7.3 8.1 8.3 9L22.2 22.8" stroke-linejoin="round" stroke-width="1.45"/><circle cx="18.3" cy="6" r="1.4" stroke-width="1.25"/></svg>
<div class="a" style="left:108.80000000000001px;top:134.0px;width:24px;height:24px;background:radial-gradient(closest-side,#fdfdfd 70%,rgba(253,253,253,0) 100%)"></div>
<svg style="left:111.3px;top:136.5px" width="19.2" height="19.2" viewBox="0 0 24 24" fill="none" stroke="#262626" stroke-width="1.3"><rect x="0.8" y="0.8" width="22.4" height="22.4" rx="2.3"/><path d="M0.9 14L6.3 9Q7.3 8.1 8.3 9L22.2 22.8" stroke-linejoin="round" stroke-width="1.45"/><circle cx="18.3" cy="6" r="1.4" stroke-width="1.25"/></svg>
<div class="a" style="left:134.4px;top:134.0px;width:24px;height:24px;background:radial-gradient(closest-side,#fdfdfd 70%,rgba(253,253,253,0) 100%)"></div>
<svg style="left:136.9px;top:136.5px" width="19.2" height="19.2" viewBox="0 0 24 24" fill="none" stroke="#262626" stroke-width="1.3"><rect x="0.8" y="0.8" width="22.4" height="22.4" rx="2.3"/><path d="M0.9 14L6.3 9Q7.3 8.1 8.3 9L22.2 22.8" stroke-linejoin="round" stroke-width="1.45"/><circle cx="18.3" cy="6" r="1.4" stroke-width="1.25"/></svg>
<div class="a" style="left:160.00000000000003px;top:134.0px;width:24px;height:24px;background:radial-gradient(closest-side,#fdfdfd 70%,rgba(253,253,253,0) 100%)"></div>
<svg style="left:162.5px;top:136.5px" width="19.2" height="19.2" viewBox="0 0 24 24" fill="none" stroke="#262626" stroke-width="1.3"><rect x="0.8" y="0.8" width="22.4" height="22.4" rx="2.3"/><path d="M0.9 14L6.3 9Q7.3 8.1 8.3 9L22.2 22.8" stroke-linejoin="round" stroke-width="1.45"/><circle cx="18.3" cy="6" r="1.4" stroke-width="1.25"/></svg>
<div class="a" style="left:185.60000000000002px;top:134.0px;width:24px;height:24px;background:radial-gradient(closest-side,#fdfdfd 70%,rgba(253,253,253,0) 100%)"></div>
<svg style="left:188.1px;top:136.5px" width="19.2" height="19.2" viewBox="0 0 24 24" fill="none" stroke="#262626" stroke-width="1.3"><rect x="0.8" y="0.8" width="22.4" height="22.4" rx="2.3"/><path d="M0.9 14L6.3 9Q7.3 8.1 8.3 9L22.2 22.8" stroke-linejoin="round" stroke-width="1.45"/><circle cx="18.3" cy="6" r="1.4" stroke-width="1.25"/></svg>
<div class="a" style="left:211.20000000000002px;top:134.0px;width:24px;height:24px;background:radial-gradient(closest-side,#fdfdfd 70%,rgba(253,253,253,0) 100%)"></div>
<svg style="left:213.7px;top:136.5px" width="19.2" height="19.2" viewBox="0 0 24 24" fill="none" stroke="#262626" stroke-width="1.3"><rect x="0.8" y="0.8" width="22.4" height="22.4" rx="2.3"/><path d="M0.9 14L6.3 9Q7.3 8.1 8.3 9L22.2 22.8" stroke-linejoin="round" stroke-width="1.45"/><circle cx="18.3" cy="6" r="1.4" stroke-width="1.25"/></svg>
<div class="a" style="left:236.8px;top:134.0px;width:24px;height:24px;background:radial-gradient(closest-side,#fdfdfd 70%,rgba(253,253,253,0) 100%)"></div>
<svg style="left:239.3px;top:136.5px" width="19.2" height="19.2" viewBox="0 0 24 24" fill="none" stroke="#262626" stroke-width="1.3"><rect x="0.8" y="0.8" width="22.4" height="22.4" rx="2.3"/><path d="M0.9 14L6.3 9Q7.3 8.1 8.3 9L22.2 22.8" stroke-linejoin="round" stroke-width="1.45"/><circle cx="18.3" cy="6" r="1.4" stroke-width="1.25"/></svg>
<div class="a" style="left:262.4px;top:134.0px;width:24px;height:24px;background:radial-gradient(closest-side,#fdfdfd 70%,rgba(253,253,253,0) 100%)"></div>
<svg style="left:264.9px;top:136.5px" width="19.2" height="19.2" viewBox="0 0 24 24" fill="none" stroke="#262626" stroke-width="1.3"><rect x="0.8" y="0.8" width="22.4" height="22.4" rx="2.3"/><path d="M0.9 14L6.3 9Q7.3 8.1 8.3 9L22.2 22.8" stroke-linejoin="round" stroke-width="1.45"/><circle cx="18.3" cy="6" r="1.4" stroke-width="1.25"/></svg>
<div class="a" style="left:288.0px;top:134.0px;width:24px;height:24px;background:radial-gradient(closest-side,#fdfdfd 70%,rgba(253,253,253,0) 100%)"></div>
<svg style="left:290.5px;top:136.5px" width="19.2" height="19.2" viewBox="0 0 24 24" fill="none" stroke="#262626" stroke-width="1.3"><rect x="0.8" y="0.8" width="22.4" height="22.4" rx="2.3"/><path d="M0.9 14L6.3 9Q7.3 8.1 8.3 9L22.2 22.8" stroke-linejoin="round" stroke-width="1.45"/><circle cx="18.3" cy="6" r="1.4" stroke-width="1.25"/></svg>
<div class="a" style="left:313.6px;top:134.0px;width:24px;height:24px;background:radial-gradient(closest-side,#fdfdfd 70%,rgba(253,253,253,0) 100%)"></div>
<svg style="left:316.1px;top:136.5px" width="19.2" height="19.2" viewBox="0 0 24 24" fill="none" stroke="#262626" stroke-width="1.3"><rect x="0.8" y="0.8" width="22.4" height="22.4" rx="2.3"/><path d="M0.9 14L6.3 9Q7.3 8.1 8.3 9L22.2 22.8" stroke-linejoin="round" stroke-width="1.45"/><circle cx="18.3" cy="6" r="1.4" stroke-width="1.25"/></svg>
<div class="a" style="left:6.4px;top:159.60000000000002px;width:24px;height:24px;background:radial-gradient(closest-side,#fdfdfd 70%,rgba(253,253,253,0) 100%)"></div>
<svg style="left:8.9px;top:162.1px" width="19.2" height="19.2" viewBox="0 0 24 24" fill="none" stroke="#262626" stroke-width="1.3"><rect x="0.8" y="0.8" width="22.4" height="22.4" rx="2.3"/><path d="M0.9 14L6.3 9Q7.3 8.1 8.3 9L22.2 22.8" stroke-linejoin="round" stroke-width="1.45"/><circle cx="18.3" cy="6" r="1.4" stroke-width="1.25"/></svg>
<div class="a" style="left:32.0px;top:159.60000000000002px;width:24px;height:24px;background:radial-gradient(closest-side,#fdfdfd 70%,rgba(253,253,253,0) 100%)"></div>
<svg style="left:34.5px;top:162.1px" width="19.2" height="19.2" viewBox="0 0 24 24" fill="none" stroke="#262626" stroke-width="1.3"><rect x="0.8" y="0.8" width="22.4" height="22.4" rx="2.3"/><path d="M0.9 14L6.3 9Q7.3 8.1 8.3 9L22.2 22.8" stroke-linejoin="round" stroke-width="1.45"/><circle cx="18.3" cy="6" r="1.4" stroke-width="1.25"/></svg>
<div class="a" style="left:57.6px;top:159.60000000000002px;width:24px;height:24px;background:radial-gradient(closest-side,#fdfdfd 70%,rgba(253,253,253,0) 100%)"></div>
<svg style="left:60.1px;top:162.1px" width="19.2" height="19.2" viewBox="0 0 24 24" fill="none" stroke="#262626" stroke-width="1.3"><rect x="0.8" y="0.8" width="22.4" height="22.4" rx="2.3"/><path d="M0.9 14L6.3 9Q7.3 8.1 8.3 9L22.2 22.8" stroke-linejoin="round" stroke-width="1.45"/><circle cx="18.3" cy="6" r="1.4" stroke-width="1.25"/></svg>
<div class="a" style="left:83.20000000000002px;top:159.60000000000002px;width:24px;height:24px;background:radial-gradient(closest-side,#fdfdfd 70%,rgba(253,253,253,0) 100%)"></div>
<svg style="left:85.7px;top:162.1px" width="19.2" height="19.2" viewBox="0 0 24 24" fill="none" stroke="#262626" stroke-width="1.3"><rect x="0.8" y="0.8" width="22.4" height="22.4" rx="2.3"/><path d="M0.9 14L6.3 9Q7.3 8.1 8.3 9L22.2 22.8" stroke-linejoin="round" stroke-width="1.45"/><circle cx="18.3" cy="6" r="1.4" stroke-width="1.25"/></svg>
<div class="a" style="left:108.80000000000001px;top:159.60000000000002px;width:24px;height:24px;background:radial-gradient(closest-side,#fdfdfd 70%,rgba(253,253,253,0) 100%)"></div>
<svg style="left:111.3px;top:162.1px" width="19.2" height="19.2" viewBox="0 0 24 24" fill="none" stroke="#262626" stroke-width="1.3"><rect x="0.8" y="0.8" width="22.4" height="22.4" rx="2.3"/><path d="M0.9 14L6.3 9Q7.3 8.1 8.3 9L22.2 22.8" stroke-linejoin="round" stroke-width="1.45"/><circle cx="18.3" cy="6" r="1.4" stroke-width="1.25"/></svg>
<div class="a" style="left:134.4px;top:159.60000000000002px;width:24px;height:24px;background:radial-gradient(closest-side,#fdfdfd 70%,rgba(253,253,253,0) 100%)"></div>
<svg style="left:136.9px;top:162.1px" width="19.2" height="19.2" viewBox="0 0 24 24" fill="none" stroke="#262626" stroke-width="1.3"><rect x="0.8" y="0.8" width="22.4" height="22.4" rx="2.3"/><path d="M0.9 14L6.3 9Q7.3 8.1 8.3 9L22.2 22.8" stroke-linejoin="round" stroke-width="1.45"/><circle cx="18.3" cy="6" r="1.4" stroke-width="1.25"/></svg>
<div class="a" style="left:160.00000000000003px;top:159.60000000000002px;width:24px;height:24px;background:radial-gradient(closest-side,#fdfdfd 70%,rgba(253,253,253,0) 100%)"></div>
<svg style="left:162.5px;top:162.1px" width="19.2" height="19.2" viewBox="0 0 24 24" fill="none" stroke="#262626" stroke-width="1.3"><rect x="0.8" y="0.8" width="22.4" height="22.4" rx="2.3"/><path d="M0.9 14L6.3 9Q7.3 8.1 8.3 9L22.2 22.8" stroke-linejoin="round" stroke-width="1.45"/><circle cx="18.3" cy="6" r="1.4" stroke-width="1.25"/></svg>
<div class="a" style="left:185.60000000000002px;top:159.60000000000002px;width:24px;height:24px;background:radial-gradient(closest-side,#fdfdfd 70%,rgba(253,253,253,0) 100%)"></div>
<svg style="left:188.1px;top:162.1px" width="19.2" height="19.2" viewBox="0 0 24 24" fill="none" stroke="#262626" stroke-width="1.3"><rect x="0.8" y="0.8" width="22.4" height="22.4" rx="2.3"/><path d="M0.9 14L6.3 9Q7.3 8.1 8.3 9L22.2 22.8" stroke-linejoin="round" stroke-width="1.45"/><circle cx="18.3" cy="6" r="1.4" stroke-width="1.25"/></svg>
<div class="a" style="left:211.20000000000002px;top:159.60000000000002px;width:24px;height:24px;background:radial-gradient(closest-side,#fdfdfd 70%,rgba(253,253,253,0) 100%)"></div>
<svg style="left:213.7px;top:162.1px" width="19.2" height="19.2" viewBox="0 0 24 24" fill="none" stroke="#262626" stroke-width="1.3"><rect x="0.8" y="0.8" width="22.4" height="22.4" rx="2.3"/><path d="M0.9 14L6.3 9Q7.3 8.1 8.3 9L22.2 22.8" stroke-linejoin="round" stroke-width="1.45"/><circle cx="18.3" cy="6" r="1.4" stroke-width="1.25"/></svg>
<div class="a" style="left:236.8px;top:159.60000000000002px;width:24px;height:24px;background:radial-gradient(closest-side,#fdfdfd 70%,rgba(253,253,253,0) 100%)"></div>
<svg style="left:239.3px;top:162.1px" width="19.2" height="19.2" viewBox="0 0 24 24" fill="none" stroke="#262626" stroke-width="1.3"><rect x="0.8" y="0.8" width="22.4" height="22.4" rx="2.3"/><path d="M0.9 14L6.3 9Q7.3 8.1 8.3 9L22.2 22.8" stroke-linejoin="round" stroke-width="1.45"/><circle cx="18.3" cy="6" r="1.4" stroke-width="1.25"/></svg>
<div class="a" style="left:262.4px;top:159.60000000000002px;width:24px;height:24px;background:radial-gradient(closest-side,#fdfdfd 70%,rgba(253,253,253,0) 100%)"></div>
<svg style="left:264.9px;top:162.1px" width="19.2" height="19.2" viewBox="0 0 24 24" fill="none" stroke="#262626" stroke-width="1.3"><rect x="0.8" y="0.8" width="22.4" height="22.4" rx="2.3"/><path d="M0.9 14L6.3 9Q7.3 8.1 8.3 9L22.2 22.8" stroke-linejoin="round" stroke-width="1.45"/><circle cx="18.3" cy="6" r="1.4" stroke-width="1.25"/></svg>
<div class="a" style="left:288.0px;top:159.60000000000002px;width:24px;height:24px;background:radial-gradient(closest-side,#fdfdfd 70%,rgba(253,253,253,0) 100%)"></div>
<svg style="left:290.5px;top:162.1px" width="19.2" height="19.2" viewBox="0 0 24 24" fill="none" stroke="#262626" stroke-width="1.3"><rect x="0.8" y="0.8" width="22.4" height="22.4" rx="2.3"/><path d="M0.9 14L6.3 9Q7.3 8.1 8.3 9L22.2 22.8" stroke-linejoin="round" stroke-width="1.45"/><circle cx="18.3" cy="6" r="1.4" stroke-width="1.25"/></svg>
<div class="a" style="left:313.6px;top:159.60000000000002px;width:24px;height:24px;background:radial-gradient(closest-side,#fdfdfd 70%,rgba(253,253,253,0) 100%)"></div>
<svg style="left:316.1px;top:162.1px" width="19.2" height="19.2" viewBox="0 0 24 24" fill="none" stroke="#262626" stroke-width="1.3"><rect x="0.8" y="0.8" width="22.4" height="22.4" rx="2.3"/><path d="M0.9 14L6.3 9Q7.3 8.1 8.3 9L22.2 22.8" stroke-linejoin="round" stroke-width="1.45"/><circle cx="18.3" cy="6" r="1.4" stroke-width="1.25"/></svg>
<div class="a" style="left:6.4px;top:185.20000000000002px;width:24px;height:24px;background:radial-gradient(closest-side,#fdfdfd 70%,rgba(253,253,253,0) 100%)"></div>
<svg style="left:8.9px;top:187.7px" width="19.2" height="19.2" viewBox="0 0 24 24" fill="none" stroke="#262626" stroke-width="1.3"><rect x="0.8" y="0.8" width="22.4" height="22.4" rx="2.3"/><path d="M0.9 14L6.3 9Q7.3 8.1 8.3 9L22.2 22.8" stroke-linejoin="round" stroke-width="1.45"/><circle cx="18.3" cy="6" r="1.4" stroke-width="1.25"/></svg>
<div class="a" style="left:32.0px;top:185.20000000000002px;width:24px;height:24px;background:radial-gradient(closest-side,#fdfdfd 70%,rgba(253,253,253,0) 100%)"></div>
<svg style="left:34.5px;top:187.7px" width="19.2" height="19.2" viewBox="0 0 24 24" fill="none" stroke="#262626" stroke-width="1.3"><rect x="0.8" y="0.8" width="22.4" height="22.4" rx="2.3"/><path d="M0.9 14L6.3 9Q7.3 8.1 8.3 9L22.2 22.8" stroke-linejoin="round" stroke-width="1.45"/><circle cx="18.3" cy="6" r="1.4" stroke-width="1.25"/></svg>
<div class="a" style="left:57.6px;top:185.20000000000002px;width:24px;height:24px;background:radial-gradient(closest-side,#fdfdfd 70%,rgba(253,253,253,0) 100%)"></div>
<svg style="left:60.1px;top:187.7px" width="19.2" height="19.2" viewBox="0 0 24 24" fill="none" stroke="#262626" stroke-width="1.3"><rect x="0.8" y="0.8" width="22.4" height="22.4" rx="2.3"/><path d="M0.9 14L6.3 9Q7.3 8.1 8.3 9L22.2 22.8" stroke-linejoin="round" stroke-width="1.45"/><circle cx="18.3" cy="6" r="1.4" stroke-width="1.25"/></svg>
<div class="a" style="left:83.20000000000002px;top:185.20000000000002px;width:24px;height:24px;background:radial-gradient(closest-side,#fdfdfd 70%,rgba(253,253,253,0) 100%)"></div>
<svg style="left:85.7px;top:187.7px" width="19.2" height="19.2" viewBox="0 0 24 24" fill="none" stroke="#262626" stroke-width="1.3"><rect x="0.8" y="0.8" width="22.4" height="22.4" rx="2.3"/><path d="M0.9 14L6.3 9Q7.3 8.1 8.3 9L22.2 22.8" stroke-linejoin="round" stroke-width="1.45"/><circle cx="18.3" cy="6" r="1.4" stroke-width="1.25"/></svg>
<div class="a" style="left:108.80000000000001px;top:185.20000000000002px;width:24px;height:24px;background:radial-gradient(closest-side,#fdfdfd 70%,rgba(253,253,253,0) 100%)"></div>
<svg style="left:111.3px;top:187.7px" width="19.2" height="19.2" viewBox="0 0 24 24" fill="none" stroke="#262626" stroke-width="1.3"><rect x="0.8" y="0.8" width="22.4" height="22.4" rx="2.3"/><path d="M0.9 14L6.3 9Q7.3 8.1 8.3 9L22.2 22.8" stroke-linejoin="round" stroke-width="1.45"/><circle cx="18.3" cy="6" r="1.4" stroke-width="1.25"/></svg>
<div class="a" style="left:134.4px;top:185.20000000000002px;width:24px;height:24px;background:radial-gradient(closest-side,#fdfdfd 70%,rgba(253,253,253,0) 100%)"></div>
<svg style="left:136.9px;top:187.7px" width="19.2" height="19.2" viewBox="0 0 24 24" fill="none" stroke="#262626" stroke-width="1.3"><rect x="0.8" y="0.8" width="22.4" height="22.4" rx="2.3"/><path d="M0.9 14L6.3 9Q7.3 8.1 8.3 9L22.2 22.8" stroke-linejoin="round" stroke-width="1.45"/><circle cx="18.3" cy="6" r="1.4" stroke-width="1.25"/></svg>
<div class="a" style="left:160.00000000000003px;top:185.20000000000002px;width:24px;height:24px;background:radial-gradient(closest-side,#fdfdfd 70%,rgba(253,253,253,0) 100%)"></div>
<svg style="left:162.5px;top:187.7px" width="19.2" height="19.2" viewBox="0 0 24 24" fill="none" stroke="#262626" stroke-width="1.3"><rect x="0.8" y="0.8" width="22.4" height="22.4" rx="2.3"/><path d="M0.9 14L6.3 9Q7.3 8.1 8.3 9L22.2 22.8" stroke-linejoin="round" stroke-width="1.45"/><circle cx="18.3" cy="6" r="1.4" stroke-width="1.25"/></svg>
<div class="a" style="left:185.60000000000002px;top:185.20000000000002px;width:24px;height:24px;background:radial-gradient(closest-side,#fdfdfd 70%,rgba(253,253,253,0) 100%)"></div>
<svg style="left:188.1px;top:187.7px" width="19.2" height="19.2" viewBox="0 0 24 24" fill="none" stroke="#262626" stroke-width="1.3"><rect x="0.8" y="0.8" width="22.4" height="22.4" rx="2.3"/><path d="M0.9 14L6.3 9Q7.3 8.1 8.3 9L22.2 22.8" stroke-linejoin="round" stroke-width="1.45"/><circle cx="18.3" cy="6" r="1.4" stroke-width="1.25"/></svg>
<div class="a" style="left:211.20000000000002px;top:185.20000000000002px;width:24px;height:24px;background:radial-gradient(closest-side,#fdfdfd 70%,rgba(253,253,253,0) 100%)"></div>
<svg style="left:213.7px;top:187.7px" width="19.2" height="19.2" viewBox="0 0 24 24" fill="none" stroke="#262626" stroke-width="1.3"><rect x="0.8" y="0.8" width="22.4" height="22.4" rx="2.3"/><path d="M0.9 14L6.3 9Q7.3 8.1 8.3 9L22.2 22.8" stroke-linejoin="round" stroke-width="1.45"/><circle cx="18.3" cy="6" r="1.4" stroke-width="1.25"/></svg>
<div class="a" style="left:236.8px;top:185.20000000000002px;width:24px;height:24px;background:radial-gradient(closest-side,#fdfdfd 70%,rgba(253,253,253,0) 100%)"></div>
<svg style="left:239.3px;top:187.7px" width="19.2" height="19.2" viewBox="0 0 24 24" fill="none" stroke="#262626" stroke-width="1.3"><rect x="0.8" y="0.8" width="22.4" height="22.4" rx="2.3"/><path d="M0.9 14L6.3 9Q7.3 8.1 8.3 9L22.2 22.8" stroke-linejoin="round" stroke-width="1.45"/><circle cx="18.3" cy="6" r="1.4" stroke-width="1.25"/></svg>
<div class="a" style="left:262.4px;top:185.20000000000002px;width:24px;height:24px;background:radial-gradient(closest-side,#fdfdfd 70%,rgba(253,253,253,0) 100%)"></div>
<svg style="left:264.9px;top:187.7px" width="19.2" height="19.2" viewBox="0 0 24 24" fill="none" stroke="#262626" stroke-width="1.3"><rect x="0.8" y="0.8" width="22.4" height="22.4" rx="2.3"/><path d="M0.9 14L6.3 9Q7.3 8.1 8.3 9L22.2 22.8" stroke-linejoin="round" stroke-width="1.45"/><circle cx="18.3" cy="6" r="1.4" stroke-width="1.25"/></svg>
<div class="a" style="left:288.0px;top:185.20000000000002px;width:24px;height:24px;background:radial-gradient(closest-side,#fdfdfd 70%,rgba(253,253,253,0) 100%)"></div>
<svg style="left:290.5px;top:187.7px" width="19.2" height="19.2" viewBox="0 0 24 24" fill="none" stroke="#262626" stroke-width="1.3"><rect x="0.8" y="0.8" width="22.4" height="22.4" rx="2.3"/><path d="M0.9 14L6.3 9Q7.3 8.1 8.3 9L22.2 22.8" stroke-linejoin="round" stroke-width="1.45"/><circle cx="18.3" cy="6" r="1.4" stroke-width="1.25"/></svg>
<div class="a" style="left:313.6px;top:185.20000000000002px;width:24px;height:24px;background:radial-gradient(closest-side,#fdfdfd 70%,rgba(253,253,253,0) 100%)"></div>
<svg style="left:316.1px;top:187.7px" width="19.2" height="19.2" viewBox="0 0 24 24" fill="none" stroke="#262626" stroke-width="1.3"><rect x="0.8" y="0.8" width="22.4" height="22.4" rx="2.3"/><path d="M0.9 14L6.3 9Q7.3 8.1 8.3 9L22.2 22.8" stroke-linejoin="round" stroke-width="1.45"/><circle cx="18.3" cy="6" r="1.4" stroke-width="1.25"/></svg>
</div>
<div class="a" style="left:396px;top:20px;width:14px;height:221px;background:linear-gradient(90deg,rgba(255,255,255,0),#fff 45%)"></div>
</div>
<div class="a" style="left:434px;top:242.3px;width:163px;height:92.7px;background:#fff;border-radius:2.5px;box-shadow:0 3px 9px rgba(0,0,0,.38),0 0 0 .4px rgba(0,0,0,.35);overflow:hidden">
<div class="a" style="left:0;top:0;width:163px;height:11.3px;background:#f1f1f1"></div>
<div class="t" style="left:3.4px;top:6.3px;color:#222;font-size:4.85px">Microsoft Visual C++ Runtime Library</div>
<svg style="left:154.6px;top:3.3px" width="4.6" height="4.6" viewBox="0 0 10 10"><path d="M1 1L9 9M9 1L1 9" stroke="#333" stroke-width="1.1"/></svg>
<div class="a" style="left:0;top:76.3px;width:163px;height:16.4px;background:#f0f0f0"></div>
<svg style="left:8.3px;top:20.7px" width="12.6" height="12.6" viewBox="0 0 20 20"><defs><linearGradient id="eg" x1="0" y1="0" x2="0" y2="1"><stop offset="0" stop-color="#f2602a"/><stop offset="1" stop-color="#d7330f"/></linearGradient></defs><circle cx="10" cy="10" r="9.6" fill="url(#eg)"/><path d="M6.3 6.3L13.7 13.7M13.7 6.3L6.3 13.7" stroke="#fff" stroke-width="2.1" stroke-linecap="round"/></svg>
<div class="t" style="left:25px;top:24.2px;color:#0a0a0a;font-size:4.7px">Runtime Error!</div>
<div class="t" style="left:25px;top:34.7px;color:#0a0a0a;font-size:4.7px">Program:</div>
<div class="t" style="left:25px;top:50.2px;color:#0a0a0a;font-size:4.7px">This application has requested the Runtime to terminate it in</div>
<div class="t" style="left:25px;top:55.5px;color:#0a0a0a;font-size:4.7px">an unusual way.</div>
<div class="t" style="left:25px;top:60.8px;color:#0a0a0a;font-size:4.7px">Please contact the application's support team for more</div>
<div class="t" style="left:25px;top:66.1px;color:#0a0a0a;font-size:4.7px">information.</div>
<div class="a" style="left:127.2px;top:80.5px;width:29.6px;height:8.8px;background:#fdfdfd;border:0.8px solid #2f8fe0;border-radius:1.6px"></div>
<div class="t" style="left:142px;top:85.8px;transform:translate(-50%,-50%);color:#000;font-size:4.7px">OK</div>
</div>
<div class="a" style="left:627px;top:26.5px;width:397px;height:531px;background:#1e1e1e;"></div>
<div class="a" style="left:626px;top:26.5px;width:1px;height:531px;background:#202020;"></div>
<div class="tab on" style="left:627px;width:40px"></div>
<div class="t " style="left:647px;top:33.9px;transform:translate(-50%,-50%);color:#e6e6e6;font-size:5.6px">Errors</div>
<div class="a" style="left:627px;top:38.7px;width:133px;height:517.3px;background:#404040;"></div>
<div class="t " style="left:631.7px;top:45.1px;color:#c8c8c8;font-size:5.0px">Screen /</div>
<div class="t " style="left:653.6px;top:45.1px;color:#c8c8c8;font-size:5.0px">Widget</div>
<div class="t " style="left:676px;top:45.1px;color:#c8c8c8;font-size:5.0px">Property</div>
<div class="t " style="left:698px;top:45.1px;color:#c8c8c8;font-size:5.0px">Description</div>
<div class="tab on" style="left:761.5px;width:39.5px"></div>
<div class="tab" style="left:803px;width:38.5px"></div>
<div class="tab" style="left:843px;width:38.5px"></div>
<div class="tab" style="left:883px;width:38.5px"></div>
<div class="t " style="left:781.3px;top:33.9px;transform:translate(-50%,-50%);color:#e6e6e6;font-size:5.6px">Inspector</div>
<div class="t " style="left:822px;top:33.9px;transform:translate(-50%,-50%);color:#5c5c5c;font-size:5.6px">History</div>
<div class="t " style="left:862px;top:33.9px;transform:translate(-50%,-50%);color:#5c5c5c;font-size:5.6px">Font Manager</div>
<div class="t " style="left:902px;top:33.9px;transform:translate(-50%,-50%);color:#5c5c5c;font-size:5.6px">Animation</div>
<div class="a" style="left:761.5px;top:38.7px;width:162.3px;height:517.3px;background:#393939;"></div>
<div class="a" style="left:761.5px;top:41px;width:162.3px;height:9.3px;background:#2d2d2d;"></div>
<svg style="left:763.5px;top:44.74px" width="3.2" height="2.2399999999999998" viewBox="0 0 2 1.4"><path d="M0 0H2L1 1.4Z" fill="#fff"/></svg>
<div class="t b" style="left:769.0px;top:46.6px;font-size:4.65px">SCREEN</div>
<div class="t g" style="left:769px;top:60.3px;font-size:5.0px;color:#8a8a8a">Name</div>
<div class="a" style="left:769px;top:62.7px;width:147px;height:8.2px;background:#4e4e4e;border-radius:1.5px"></div>
<div class="t b" style="left:771.5px;top:67.7px;font-size:5.2px">EightMillimeter</div>
<div class="t g" style="left:769px;top:77.9px;font-size:5.1px;color:#777">EightMillimeter</div>
<svg style="left:770.25px;top:85.33px" width="2.9" height="2.03" viewBox="0 0 2 1.4"><path d="M0 0H2L1 1.4Z" fill="#fff"/></svg>
<div class="a" style="left:775.5px;top:86.9px;width:140.5px;height:6px;margin-top:-3px;display:flex;align-items:center;white-space:nowrap;line-height:1;font-size:5.0px;font-weight:bold;color:#e8e8e8"><span>Layout</span><i style="flex:1;height:0.8px;background:#636363;margin-left:2.6px;margin-top:-2.2px"></i></div>
<div class="t g" style="left:769px;top:94.9px;font-size:4.7px;color:#777">Flex Flow</div>
<div class="a" style="left:769px;top:97.7px;width:147px;height:8.4px;background:#4e4e4e;border-radius:1.5px"></div>
<div class="t b" style="left:772.7px;top:102.9px;font-size:5.2px">No Layout</div>
<svg style="left:908.9px;top:101.04px" width="3.2" height="2.2399999999999998" viewBox="0 0 2 1.4"><path d="M0 0H2L1 1.4Z" fill="#fff"/></svg>
<svg style="left:770.83px;top:113.85px" width="2.03" height="2.9" viewBox="0 0 1.4 2"><path d="M0 0V2L1.4 1Z" fill="#fff"/></svg>
<div class="a" style="left:775.5px;top:116.2px;width:140.5px;height:6px;margin-top:-3px;display:flex;align-items:center;white-space:nowrap;line-height:1;font-size:5.0px;font-weight:bold;color:#e8e8e8"><span>Flags</span><i style="flex:1;height:0.8px;background:#636363;margin-left:2.6px;margin-top:-2.2px"></i></div>
<svg style="left:770.83px;top:123.14999999999999px" width="2.03" height="2.9" viewBox="0 0 1.4 2"><path d="M0 0V2L1.4 1Z" fill="#fff"/></svg>
<div class="a" style="left:775.5px;top:125.5px;width:140.5px;height:6px;margin-top:-3px;display:flex;align-items:center;white-space:nowrap;line-height:1;font-size:5.0px;font-weight:bold;color:#e8e8e8"><span>States</span><i style="flex:1;height:0.8px;background:#636363;margin-left:2.6px;margin-top:-2.2px"></i></div>
<svg style="left:770.25px;top:133.32999999999998px" width="2.9" height="2.03" viewBox="0 0 2 1.4"><path d="M0 0H2L1 1.4Z" fill="#fff"/></svg>
<div class="a" style="left:775.5px;top:134.9px;width:140.5px;height:6px;margin-top:-3px;display:flex;align-items:center;white-space:nowrap;line-height:1;font-size:5.0px;font-weight:bold;color:#e8e8e8"><span>Screen</span><i style="flex:1;height:0.8px;background:#636363;margin-left:2.6px;margin-top:-2.2px"></i></div>
<div class="a" style="left:771px;top:140.9px;width:5.8px;height:5.8px;background:#585858;border-radius:.8px"></div>
<div class="t " style="left:781px;top:144.0px;font-size:5.3px;color:#bdbdbd">Temporary</div>
<div class="a" style="left:771px;top:150.6px;width:5.8px;height:5.8px;background:#585858;border-radius:.8px"></div>
<div class="t " style="left:781px;top:154.4px;font-size:5.15px;color:#bdbdbd">Don't export screen</div>
<div class="a" style="left:761.5px;top:164px;width:162.3px;height:9.3px;background:#2d2d2d;"></div>
<svg style="left:763.5px;top:167.73999999999998px" width="3.2" height="2.2399999999999998" viewBox="0 0 2 1.4"><path d="M0 0H2L1 1.4Z" fill="#fff"/></svg>
<div class="t b" style="left:769.0px;top:169.6px;font-size:4.65px">STYLE SETTINGS</div>
<div class="t g" style="left:769px;top:182.3px;font-size:4.9px;color:#8a8a8a">STATE</div>
<div class="a" style="left:769px;top:185.8px;width:147px;height:8.3px;background:#4e4e4e;border-radius:1.5px"></div>
<div class="t b" style="left:772.7px;top:190.9px;font-size:4.85px">DEFAULT</div>
<svg style="left:908.9px;top:189.04px" width="3.2" height="2.2399999999999998" viewBox="0 0 2 1.4"><path d="M0 0H2L1 1.4Z" fill="#fff"/></svg>
<div class="a" style="left:769px;top:201.6px;width:147px;height:175.8px;background:#3d3d3d;border-radius:1.5px"></div>
<svg style="left:770.8499999999999px;top:206.13px" width="2.9" height="2.03" viewBox="0 0 2 1.4"><path d="M0 0H2L1 1.4Z" fill="#fff"/></svg>
<div class="t b" style="left:776px;top:207.9px;font-size:4.7px">STYLE (MAIN)</div>
<svg style="left:782.33px;top:216.75px" width="2.03" height="2.9" viewBox="0 0 1.4 2"><path d="M0 0V2L1.4 1Z" fill="#fff"/></svg>
<div class="a" style="left:787px;top:219.1px;width:117px;height:6px;margin-top:-3px;display:flex;align-items:center;white-space:nowrap;line-height:1;font-size:4.95px;font-weight:bold;color:#d4d4d4"><span>Background</span><i style="flex:1;height:0.8px;background:#636363;margin-left:2.6px;margin-top:-2.2px"></i></div>
<svg style="left:782.33px;top:226.45000000000002px" width="2.03" height="2.9" viewBox="0 0 1.4 2"><path d="M0 0V2L1.4 1Z" fill="#fff"/></svg>
<div class="a" style="left:787px;top:228.8px;width:117px;height:6px;margin-top:-3px;display:flex;align-items:center;white-space:nowrap;line-height:1;font-size:4.95px;font-weight:bold;color:#d4d4d4"><span>Background image</span><i style="flex:1;height:0.8px;background:#636363;margin-left:2.6px;margin-top:-2.2px"></i></div>
<svg style="left:782.33px;top:236.15px" width="2.03" height="2.9" viewBox="0 0 1.4 2"><path d="M0 0V2L1.4 1Z" fill="#fff"/></svg>
<div class="a" style="left:787px;top:238.5px;width:117px;height:6px;margin-top:-3px;display:flex;align-items:center;white-space:nowrap;line-height:1;font-size:4.95px;font-weight:bold;color:#d4d4d4"><span>Border</span><i style="flex:1;height:0.8px;background:#636363;margin-left:2.6px;margin-top:-2.2px"></i></div>
<svg style="left:782.33px;top:245.75px" width="2.03" height="2.9" viewBox="0 0 1.4 2"><path d="M0 0V2L1.4 1Z" fill="#fff"/></svg>
<div class="a" style="left:787px;top:248.1px;width:117px;height:6px;margin-top:-3px;display:flex;align-items:center;white-space:nowrap;line-height:1;font-size:4.95px;font-weight:bold;color:#d4d4d4"><span>Outline</span><i style="flex:1;height:0.8px;background:#636363;margin-left:2.6px;margin-top:-2.2px"></i></div>
<svg style="left:782.33px;top:255.35000000000002px" width="2.03" height="2.9" viewBox="0 0 1.4 2"><path d="M0 0V2L1.4 1Z" fill="#fff"/></svg>
<div class="a" style="left:787px;top:257.7px;width:117px;height:6px;margin-top:-3px;display:flex;align-items:center;white-space:nowrap;line-height:1;font-size:4.95px;font-weight:bold;color:#d4d4d4"><span>Shadow</span><i style="flex:1;height:0.8px;background:#636363;margin-left:2.6px;margin-top:-2.2px"></i></div>
<svg style="left:782.33px;top:264.95px" width="2.03" height="2.9" viewBox="0 0 1.4 2"><path d="M0 0V2L1.4 1Z" fill="#fff"/></svg>
<div class="a" style="left:787px;top:267.29999999999995px;width:117px;height:6px;margin-top:-3px;display:flex;align-items:center;white-space:nowrap;line-height:1;font-size:4.95px;font-weight:bold;color:#d4d4d4"><span>Blend</span><i style="flex:1;height:0.8px;background:#636363;margin-left:2.6px;margin-top:-2.2px"></i></div>
<svg style="left:782.33px;top:274.55px" width="2.03" height="2.9" viewBox="0 0 1.4 2"><path d="M0 0V2L1.4 1Z" fill="#fff"/></svg>
<div class="a" style="left:787px;top:276.9px;width:117px;height:6px;margin-top:-3px;display:flex;align-items:center;white-space:nowrap;line-height:1;font-size:4.95px;font-weight:bold;color:#d4d4d4"><span>Paddings</span><i style="flex:1;height:0.8px;background:#636363;margin-left:2.6px;margin-top:-2.2px"></i></div>
<svg style="left:782.33px;top:284.05px" width="2.03" height="2.9" viewBox="0 0 1.4 2"><path d="M0 0V2L1.4 1Z" fill="#fff"/></svg>
<div class="a" style="left:787px;top:286.4px;width:117px;height:6px;margin-top:-3px;display:flex;align-items:center;white-space:nowrap;line-height:1;font-size:4.95px;font-weight:bold;color:#d4d4d4"><span>Text</span><i style="flex:1;height:0.8px;background:#636363;margin-left:2.6px;margin-top:-2.2px"></i></div>
<svg style="left:770.8499999999999px;top:299.13px" width="2.9" height="2.03" viewBox="0 0 2 1.4"><path d="M0 0H2L1 1.4Z" fill="#fff"/></svg>
<div class="t b" style="left:776px;top:300.9px;font-size:4.7px">STYLE (SCROLLBAR)</div>
<svg style="left:782.33px;top:309.55px" width="2.03" height="2.9" viewBox="0 0 1.4 2"><path d="M0 0V2L1.4 1Z" fill="#fff"/></svg>
<div class="a" style="left:787px;top:311.9px;width:117px;height:6px;margin-top:-3px;display:flex;align-items:center;white-space:nowrap;line-height:1;font-size:4.95px;font-weight:bold;color:#d4d4d4"><span>Background</span><i style="flex:1;height:0.8px;background:#636363;margin-left:2.6px;margin-top:-2.2px"></i></div>
<svg style="left:782.33px;top:319.25px" width="2.03" height="2.9" viewBox="0 0 1.4 2"><path d="M0 0V2L1.4 1Z" fill="#fff"/></svg>
<div class="a" style="left:787px;top:321.59999999999997px;width:117px;height:6px;margin-top:-3px;display:flex;align-items:center;white-space:nowrap;line-height:1;font-size:4.95px;font-weight:bold;color:#d4d4d4"><span>Background image</span><i style="flex:1;height:0.8px;background:#636363;margin-left:2.6px;margin-top:-2.2px"></i></div>
<svg style="left:782.33px;top:328.85px" width="2.03" height="2.9" viewBox="0 0 1.4 2"><path d="M0 0V2L1.4 1Z" fill="#fff"/></svg>
<div class="a" style="left:787px;top:331.2px;width:117px;height:6px;margin-top:-3px;display:flex;align-items:center;white-space:nowrap;line-height:1;font-size:4.95px;font-weight:bold;color:#d4d4d4"><span>Border</span><i style="flex:1;height:0.8px;background:#636363;margin-left:2.6px;margin-top:-2.2px"></i></div>
<svg style="left:782.33px;top:338.55px" width="2.03" height="2.9" viewBox="0 0 1.4 2"><path d="M0 0V2L1.4 1Z" fill="#fff"/></svg>
<div class="a" style="left:787px;top:340.9px;width:117px;height:6px;margin-top:-3px;display:flex;align-items:center;white-space:nowrap;line-height:1;font-size:4.95px;font-weight:bold;color:#d4d4d4"><span>Outline</span><i style="flex:1;height:0.8px;background:#636363;margin-left:2.6px;margin-top:-2.2px"></i></div>
<svg style="left:782.33px;top:348.15000000000003px" width="2.03" height="2.9" viewBox="0 0 1.4 2"><path d="M0 0V2L1.4 1Z" fill="#fff"/></svg>
<div class="a" style="left:787px;top:350.5px;width:117px;height:6px;margin-top:-3px;display:flex;align-items:center;white-space:nowrap;line-height:1;font-size:4.95px;font-weight:bold;color:#d4d4d4"><span>Shadow</span><i style="flex:1;height:0.8px;background:#636363;margin-left:2.6px;margin-top:-2.2px"></i></div>
<svg style="left:782.33px;top:357.75px" width="2.03" height="2.9" viewBox="0 0 1.4 2"><path d="M0 0V2L1.4 1Z" fill="#fff"/></svg>
<div class="a" style="left:787px;top:360.09999999999997px;width:117px;height:6px;margin-top:-3px;display:flex;align-items:center;white-space:nowrap;line-height:1;font-size:4.95px;font-weight:bold;color:#d4d4d4"><span>Blend</span><i style="flex:1;height:0.8px;background:#636363;margin-left:2.6px;margin-top:-2.2px"></i></div>
<svg style="left:782.33px;top:367.35px" width="2.03" height="2.9" viewBox="0 0 1.4 2"><path d="M0 0V2L1.4 1Z" fill="#fff"/></svg>
<div class="a" style="left:787px;top:369.7px;width:117px;height:6px;margin-top:-3px;display:flex;align-items:center;white-space:nowrap;line-height:1;font-size:4.95px;font-weight:bold;color:#d4d4d4"><span>Paddings</span><i style="flex:1;height:0.8px;background:#636363;margin-left:2.6px;margin-top:-2.2px"></i></div>
<div class="a" style="left:761.5px;top:384.3px;width:162.3px;height:9.3px;background:#2d2d2d;"></div>
<svg style="left:763.5px;top:388.04px" width="3.2" height="2.2399999999999998" viewBox="0 0 2 1.4"><path d="M0 0H2L1 1.4Z" fill="#fff"/></svg>
<div class="t b" style="left:769.0px;top:389.9px;font-size:4.65px">EVENTS</div>
<div class="btn" style="left:802.8px;top:400.6px;width:80.4px;height:9.5px;line-height:10.6px">ADD EVENT</div>
<div class="tab on" style="left:925px;width:39.5px"></div>
<div class="t " style="left:945.2px;top:33.9px;transform:translate(-50%,-50%);color:#e6e6e6;font-size:5.6px">Themes</div>
<div class="a" style="left:925px;top:38.7px;width:99px;height:517.3px;background:#393939;"></div>
<div class="a" style="left:925px;top:41.3px;width:99px;height:9.3px;background:#2d2d2d;"></div>
<svg style="left:927.0px;top:45.04px" width="3.2" height="2.2399999999999998" viewBox="0 0 2 1.4"><path d="M0 0H2L1 1.4Z" fill="#fff"/></svg>
<div class="t b" style="left:932.5px;top:46.9px;font-size:4.65px">SELECT THEME</div>
<div class="t g" style="left:932.5px;top:60.1px;font-size:5.1px;color:#8a8a8a">Selected theme</div>
<div class="a" style="left:932.5px;top:63.2px;width:83.5px;height:8.8px;background:#4a4a4a;border-radius:1.5px"></div>
<div class="t b" style="left:936px;top:68.60000000000001px;font-size:5.2px">Default theme</div>
<svg style="left:1008.6999999999999px;top:66.54px" width="3.2" height="2.2399999999999998" viewBox="0 0 2 1.4"><path d="M0 0H2L1 1.4Z" fill="#fff"/></svg>
<div class="btn" style="left:944.5px;top:79.6px;width:59.8px;height:9.3px;line-height:10.4px">REFRESH ALL SCREEN</div>
<div class="a" style="left:925px;top:94.2px;width:99px;height:9.3px;background:#2d2d2d;"></div>
<svg style="left:927.0px;top:97.94000000000001px" width="3.2" height="2.2399999999999998" viewBox="0 0 2 1.4"><path d="M0 0H2L1 1.4Z" fill="#fff"/></svg>
<div class="t b" style="left:932.5px;top:99.80000000000001px;font-size:4.65px">COLORS OF DEFAULT THEME</div>
<div class="t g" style="left:932.5px;top:111.80000000000001px;font-size:5.0px;color:#777">Color name</div>
<div class="a" style="left:932.5px;top:115.6px;width:51px;height:8.3px;background:#4e4e4e;border-radius:1.5px"></div>
<div class="btn" style="left:986.6px;top:115px;width:35.6px;height:9.3px;line-height:10.4px">ADD COLOR</div>
<div class="a" style="left:932px;top:133.5px;width:90px;height:6px;margin-top:-3px;display:flex;align-items:center;white-space:nowrap;line-height:1;font-size:4.95px;font-weight:bold;color:#dcdcdc"><span>Colors</span><i style="flex:1;height:0.8px;background:#636363;margin-left:2.6px;margin-top:-2.2px"></i></div>
<div class="t " style="left:932.5px;top:144.20000000000002px;font-size:5.2px;color:#a8a8a8">Name</div>
<div class="t " style="left:959px;top:144.20000000000002px;font-size:5.2px;color:#a8a8a8">RGB</div>
<div class="t " style="left:985px;top:144.20000000000002px;font-size:5.2px;color:#a8a8a8">Alpha</div>
<div class="a" style="left:925px;top:152px;width:99px;height:9.3px;background:#2d2d2d;"></div>
<svg style="left:927.0px;top:155.73999999999998px" width="3.2" height="2.2399999999999998" viewBox="0 0 2 1.4"><path d="M0 0H2L1 1.4Z" fill="#fff"/></svg>
<div class="t b" style="left:932.5px;top:157.6px;font-size:4.65px">COLORS OF MORE THEMES</div>
<div class="t g" style="left:932.5px;top:170.4px;font-size:4.95px;color:#777">Theme name</div>
<div class="a" style="left:932.5px;top:173.3px;width:45.5px;height:8.3px;background:#4e4e4e;border-radius:1.5px"></div>
<div class="btn" style="left:981.5px;top:173px;width:34.7px;height:9.3px;line-height:10.4px">ADD THEME</div>
<div class="a" style="left:627px;top:555.6px;width:397px;height:1.4px;background:#1c1c1c;"></div>
</div></body></html>
